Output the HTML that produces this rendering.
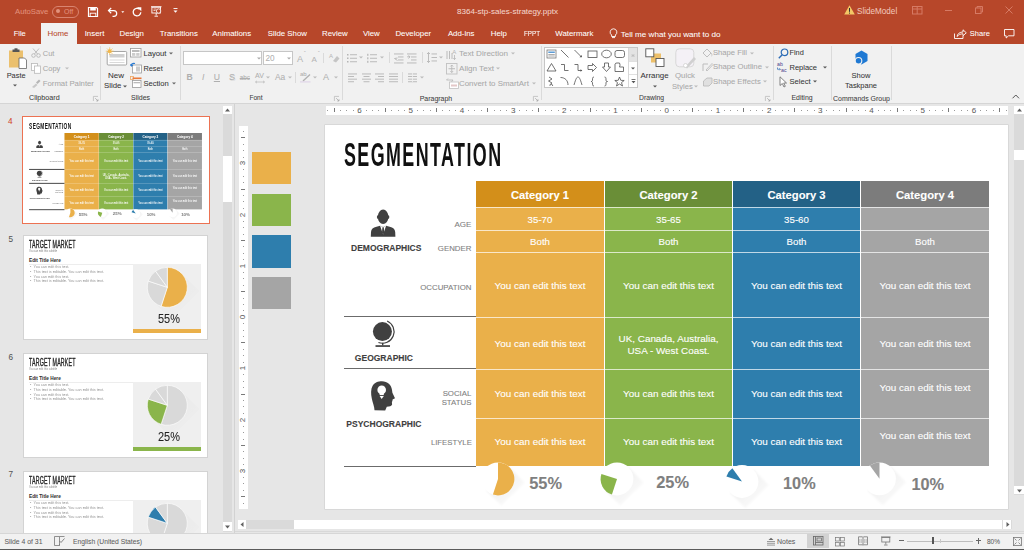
<!DOCTYPE html>
<html><head><meta charset="utf-8"><style>
html,body{margin:0;padding:0;width:1024px;height:550px;overflow:hidden;background:#E6E6E6}
body{position:relative;font-family:"Liberation Sans",sans-serif}
.r{position:absolute}
.t{position:absolute;white-space:nowrap;-webkit-text-stroke:0.05px currentColor}
.sl .t{-webkit-text-stroke:0.1px currentColor}
svg{overflow:visible}
</style></head><body>
<div class="r" style="left:0px;top:0px;width:1024px;height:44px;background:#B7472A;"></div><div class="t" style="top:8px;font-size:7.7px;line-height:7.7px;color:#E2927D;left:15.00px;font-family:'Liberation Sans', sans-serif;">AutoSave</div><div class="r" style="left:52px;top:6.2px;width:24.5px;height:9.6px;border:1px solid #D98470;border-radius:6px"></div><div class="r" style="left:55.8px;top:9.3px;width:4.2px;height:4.2px;border-radius:50%;background:#E2927D"></div><div class="t" style="top:8px;font-size:7.0px;line-height:7.0px;color:#E2927D;left:64.00px;font-family:'Liberation Sans', sans-serif;">Off</div><svg class="r" style="left:87px;top:6px" width="12" height="12" viewBox="0 0 12 12"><path d="M1.5,1.5 H9.5 L10.5,2.5 V10.5 H1.5 Z" fill="none" stroke="#fff" stroke-width="1.2"/><rect x="3.2" y="1.5" width="5.6" height="3" fill="#fff"/><rect x="3.2" y="7.2" width="5.6" height="3.3" fill="none" stroke="#fff" stroke-width="0.9"/></svg><svg class="r" style="left:107px;top:6.5px" width="20" height="10" viewBox="0 0 20 10"><path d="M1.8,3.6 H6.8 A2.9,2.9 0 0 1 6.8,9.4 H5.5" fill="none" stroke="#fff" stroke-width="1.2"/><path d="M4.2,1 L1.5,3.6 L4.2,6.2" fill="none" stroke="#fff" stroke-width="1.2"/><path d="M14.3,4.3 L17.3,4.3 L15.8,6 Z" fill="#fff"/></svg><svg class="r" style="left:131.5px;top:6.5px" width="10" height="10" viewBox="0 0 10 10"><path d="M7.6,2.3 A3.8,3.8 0 1 0 8.8,5.3" fill="none" stroke="#fff" stroke-width="1.3"/><path d="M5.3,0.2 L9.3,0.2 L9.3,4.2 Z" fill="#fff"/></svg><svg class="r" style="left:150.5px;top:5.5px" width="11" height="11" viewBox="0 0 11 11"><rect x="0" y="0.3" width="10.5" height="0.9" fill="#fff"/><rect x="0.9" y="1.2" width="8.6" height="5.8" fill="none" stroke="#fff" stroke-width="0.9"/><path d="M2.5,3 H5.5 M2.5,4.5 H4.5" stroke="#fff" stroke-width="0.7"/><circle cx="7.6" cy="5" r="2.2" fill="#B7472A" stroke="#fff" stroke-width="0.8"/><path d="M5.2,7 V9.5 M3.5,10.2 H7" stroke="#fff" stroke-width="0.9"/></svg><svg class="r" style="left:172.5px;top:8px" width="5" height="6" viewBox="0 0 5 6"><rect x="0.5" y="0" width="4" height="0.9" fill="#fff"/><path d="M0.5,2.5 H4.5 L2.5,4.8 Z" fill="#fff"/></svg><div class="t" style="top:8px;font-size:8.05px;line-height:8.05px;color:#F3D4CA;left:457.00px;font-family:'Liberation Sans', sans-serif;">8364-stp-sales-strategy.pptx</div><svg class="r" style="left:843.5px;top:4.8px" width="11" height="10" viewBox="0 0 11 10"><path d="M5.5,0.3 L10.8,9.6 H0.2 Z" fill="#F3C766"/><rect x="5" y="3" width="1" height="3.8" fill="#333"/><rect x="5" y="7.6" width="1" height="1" fill="#333"/></svg><div class="t" style="top:8px;font-size:8.15px;line-height:8.15px;color:#F0C5B8;left:857.00px;font-family:'Liberation Sans', sans-serif;">SlideModel</div><svg class="r" style="left:912px;top:6px" width="11" height="9" viewBox="0 0 11 9"><rect x="0.5" y="0.5" width="9.5" height="7.5" fill="none" stroke="#D67A64" stroke-width="1"/><path d="M5.2,0.5 V8 M0.5,3 H10" stroke="#D67A64" stroke-width="1"/></svg><div class="r" style="left:945px;top:10px;width:7px;height:1px;background:#D67A64;"></div><svg class="r" style="left:974.5px;top:6px" width="8" height="8" viewBox="0 0 8 8"><rect x="0.5" y="2" width="5.5" height="5.5" fill="none" stroke="#D67A64"/><path d="M2,2 V0.5 H7.5 V6 H6" fill="none" stroke="#D67A64"/></svg><svg class="r" style="left:1005px;top:6px" width="8" height="8" viewBox="0 0 8 8"><path d="M0.5,0.5 L7.5,7.5 M7.5,0.5 L0.5,7.5" stroke="#D67A64" stroke-width="1"/></svg><div class="r" style="left:40.8px;top:23px;width:36px;height:21px;background:#F1F1F1;"></div><div class="t" style="top:30px;font-size:7.5px;line-height:7.5px;color:#FFFFFF;left:13.70px;font-family:'Liberation Sans', sans-serif;">File</div><div class="t" style="top:30px;font-size:7.85px;line-height:7.85px;color:#B7472A;left:47.50px;font-family:'Liberation Sans', sans-serif;">Home</div><div class="t" style="top:30px;font-size:7.85px;line-height:7.85px;color:#FFFFFF;left:84.70px;font-family:'Liberation Sans', sans-serif;">Insert</div><div class="t" style="top:30px;font-size:7.85px;line-height:7.85px;color:#FFFFFF;left:119.50px;font-family:'Liberation Sans', sans-serif;">Design</div><div class="t" style="top:30px;font-size:7.85px;line-height:7.85px;color:#FFFFFF;left:159.80px;font-family:'Liberation Sans', sans-serif;">Transitions</div><div class="t" style="top:30px;font-size:7.85px;line-height:7.85px;color:#FFFFFF;left:212.30px;font-family:'Liberation Sans', sans-serif;">Animations</div><div class="t" style="top:30px;font-size:7.85px;line-height:7.85px;color:#FFFFFF;left:267.70px;font-family:'Liberation Sans', sans-serif;">Slide Show</div><div class="t" style="top:30px;font-size:7.85px;line-height:7.85px;color:#FFFFFF;left:322.00px;font-family:'Liberation Sans', sans-serif;">Review</div><div class="t" style="top:30px;font-size:7.85px;line-height:7.85px;color:#FFFFFF;left:362.90px;font-family:'Liberation Sans', sans-serif;">View</div><div class="t" style="top:30px;font-size:7.85px;line-height:7.85px;color:#FFFFFF;left:395.40px;font-family:'Liberation Sans', sans-serif;">Developer</div><div class="t" style="top:30px;font-size:7.85px;line-height:7.85px;color:#FFFFFF;left:447.90px;font-family:'Liberation Sans', sans-serif;">Add-ins</div><div class="t" style="top:30px;font-size:7.85px;line-height:7.85px;color:#FFFFFF;left:490.80px;font-family:'Liberation Sans', sans-serif;">Help</div><div class="t" style="top:30px;font-size:7.85px;line-height:7.85px;color:#FFFFFF;left:523.50px;transform:scaleX(0.8);transform-origin:0 0;font-family:'Liberation Sans', sans-serif;">FPPT</div><div class="t" style="top:30px;font-size:7.85px;line-height:7.85px;color:#FFFFFF;left:555.30px;font-family:'Liberation Sans', sans-serif;">Watermark</div><svg class="r" style="left:609px;top:27.5px" width="9" height="11" viewBox="0 0 9 11"><path d="M4.5,0.8 A3.4,3.4 0 0 1 6.4,7 V8.5 H2.6 V7 A3.4,3.4 0 0 1 4.5,0.8 Z" fill="none" stroke="#fff" stroke-width="0.9"/><path d="M3,9.6 H6" stroke="#fff" stroke-width="0.9"/></svg><div class="t" style="top:31px;font-size:8.1px;line-height:8.1px;color:#FFFFFF;left:620.70px;font-family:'Liberation Sans', sans-serif;">Tell me what you want to do</div><svg class="r" style="left:953.5px;top:28.5px" width="13" height="10" viewBox="0 0 13 10"><path d="M0.5,4.5 V9.5 H9 V7" fill="none" stroke="#fff" stroke-width="0.9"/><path d="M3,7.5 C3.5,4.5 6,3 9,3 V0.8 L12.3,3.8 L9,6.8 V4.8 C6.5,4.8 4.5,5.8 3,7.5 Z" fill="none" stroke="#fff" stroke-width="0.9"/></svg><div class="t" style="top:30px;font-size:7.5px;line-height:7.5px;color:#FFFFFF;left:969.80px;font-family:'Liberation Sans', sans-serif;">Share</div><svg class="r" style="left:1003.5px;top:28.5px" width="11" height="10" viewBox="0 0 11 10"><path d="M0.5,0.5 H10 V6.8 H4.5 L2.2,9 V6.8 H0.5 Z" fill="none" stroke="#fff" stroke-width="0.9"/></svg><div class="r" style="left:0px;top:44px;width:1024px;height:60px;background:#F1F1F1;"></div><div class="r" style="left:0px;top:103px;width:1024px;height:1px;background:#D5D5D5;"></div><svg class="r" style="left:7.5px;top:47.5px" width="20" height="22" viewBox="0 0 20 22"><rect x="1" y="2.5" width="14" height="17" fill="#EBC06E"/><path d="M4.5,1.5 H11.5 V4 H4.5 Z" fill="#555"/><path d="M6.5,0.3 H9.5 V2 H6.5 Z" fill="#555"/><path d="M11,10 H16.5 L18.5,12 V20.5 H11 Z" fill="#fff" stroke="#666" stroke-width="0.8"/></svg><div class="t" style="top:72px;font-size:7.4px;line-height:7.4px;color:#363636;left:6.70px;font-family:'Liberation Sans', sans-serif;">Paste</div><svg class="r" style="left:13px;top:84.0px" width="4" height="3" viewBox="0 0 4 3"><path d="M0,0.5 H4 L2,2.6 Z" fill="#555"/></svg><svg class="r" style="left:30.5px;top:48px" width="10" height="10" viewBox="0 0 10 10"><circle cx="2.5" cy="7.5" r="1.8" fill="none" stroke="#B0B0B0" stroke-width="0.8"/><circle cx="7.5" cy="7.5" r="1.8" fill="none" stroke="#B0B0B0" stroke-width="0.8"/><path d="M3.5,6 L8,0.5 M6.5,6 L2,0.5" stroke="#B0B0B0" stroke-width="0.8"/></svg><div class="t" style="top:50px;font-size:7.4px;line-height:7.4px;color:#A8A8A8;left:42.80px;font-family:'Liberation Sans', sans-serif;">Cut</div><svg class="r" style="left:30.5px;top:62.5px" width="11" height="11" viewBox="0 0 11 11"><rect x="0.5" y="0.5" width="6" height="7" fill="#fff" stroke="#B8B8B8" stroke-width="0.8"/><rect x="3.5" y="3" width="6" height="7.3" fill="#fff" stroke="#B8B8B8" stroke-width="0.8"/></svg><div class="t" style="top:65px;font-size:7.5px;line-height:7.5px;color:#A8A8A8;left:42.80px;font-family:'Liberation Sans', sans-serif;">Copy</div><svg class="r" style="left:65.4px;top:67.2px" width="4" height="3" viewBox="0 0 4 3"><path d="M0,0.5 H4 L2,2.6 Z" fill="#BDBDBD"/></svg><svg class="r" style="left:31px;top:78.5px" width="10" height="9" viewBox="0 0 10 9"><path d="M1,8 L5,4.5 L6.5,6 L3,9 Z" fill="#C8C8C8"/><path d="M5,3.5 L8,0.5 L9.5,2 L6.5,5 Z" fill="#B5B5B5"/></svg><div class="t" style="top:80px;font-size:7.74px;line-height:7.74px;color:#A8A8A8;left:42.80px;font-family:'Liberation Sans', sans-serif;">Format Painter</div><div class="t" style="top:95px;font-size:7.17px;line-height:7.17px;color:#404040;left:29.00px;font-family:'Liberation Sans', sans-serif;">Clipboard</div><svg class="r" style="left:93.0px;top:95.5px" width="6" height="6" viewBox="0 0 6 6"><path d="M0.4,0.4 H5 M0.4,0.4 V5" stroke="#B5B5B5" stroke-width="0.7" fill="none"/><path d="M2.2,2.2 L5,5 M5,3.3 V5 H3.3" stroke="#A0A0A0" stroke-width="0.7" fill="none"/></svg><div class="r" style="left:100.3px;top:46px;width:1px;height:54px;background:#DADADA;"></div><svg class="r" style="left:105.5px;top:46.5px" width="22" height="19" viewBox="0 0 22 19"><rect x="1.2" y="4.5" width="19.5" height="13.5" rx="1" fill="#fff" stroke="#9c9c9c" stroke-width="0.9"/><rect x="3.5" y="7" width="15" height="3.5" fill="#d0d0d0"/><path d="M3.5,13 H18.5 M3.5,15.5 H18.5" stroke="#cfcfcf" stroke-width="0.8"/><circle cx="3.7" cy="4.2" r="1.9" fill="#F2B84B"/><path d="M3.7,0.3 V8.1 M-0.2,4.2 H7.6 M1,1.5 L6.4,6.9 M6.4,1.5 L1,6.9" stroke="#F2B84B" stroke-width="0.7"/></svg><div class="t" style="top:72px;font-size:8.0px;line-height:8.0px;color:#363636;left:-384.00px;width:1000px;text-align:center;font-family:'Liberation Sans', sans-serif;">New</div><div class="t" style="top:82px;font-size:7.8px;line-height:7.8px;color:#363636;left:104.00px;font-family:'Liberation Sans', sans-serif;">Slide</div><svg class="r" style="left:123px;top:84.5px" width="4" height="3" viewBox="0 0 4 3"><path d="M0,0.5 H4 L2,2.6 Z" fill="#555"/></svg><svg class="r" style="left:130px;top:47.5px" width="12" height="10" viewBox="0 0 12 10"><rect x="0.5" y="0.5" width="10.5" height="8.5" fill="#fff" stroke="#999" stroke-width="0.8"/><rect x="2" y="2" width="7.5" height="2" fill="#bbb"/><rect x="2" y="5" width="3.3" height="2.8" fill="#ccc"/><rect x="6.2" y="5" width="3.3" height="2.8" fill="#ccc"/></svg><div class="t" style="top:50px;font-size:7.69px;line-height:7.69px;color:#363636;left:143.40px;font-family:'Liberation Sans', sans-serif;">Layout</div><svg class="r" style="left:168.5px;top:52.0px" width="4" height="3" viewBox="0 0 4 3"><path d="M0,0.5 H4 L2,2.6 Z" fill="#666"/></svg><svg class="r" style="left:130px;top:61.5px" width="12" height="12" viewBox="0 0 12 12"><rect x="2.5" y="3" width="9" height="8" fill="#fff" stroke="#999" stroke-width="0.8"/><rect x="6" y="4.5" width="4" height="5" fill="#ccc"/><path d="M0.8,4 A3.5,3.5 0 0 1 5,1.5" fill="none" stroke="#2B7CD3" stroke-width="1.1"/><path d="M0,2 L1.2,4.8 L3.5,3.2 Z" fill="#2B7CD3"/></svg><div class="t" style="top:65px;font-size:7.4px;line-height:7.4px;color:#363636;left:143.40px;font-family:'Liberation Sans', sans-serif;">Reset</div><svg class="r" style="left:130px;top:76px" width="12" height="12" viewBox="0 0 12 12"><rect x="0.5" y="0.5" width="3" height="3" fill="none" stroke="#F0A860" stroke-width="0.8"/><rect x="2.5" y="1.5" width="9" height="1.6" fill="#E8793A"/><rect x="2.5" y="4.5" width="8.5" height="7" fill="#fff" stroke="#999" stroke-width="0.8"/><rect x="3.5" y="6" width="6.5" height="1.3" fill="#bbb"/></svg><div class="t" style="top:80px;font-size:7.62px;line-height:7.62px;color:#363636;left:143.40px;font-family:'Liberation Sans', sans-serif;">Section</div><svg class="r" style="left:171.5px;top:82.0px" width="4" height="3" viewBox="0 0 4 3"><path d="M0,0.5 H4 L2,2.6 Z" fill="#666"/></svg><div class="t" style="top:94px;font-size:7.0px;line-height:7.0px;color:#404040;left:131.00px;font-family:'Liberation Sans', sans-serif;">Slides</div><div class="r" style="left:180.3px;top:46px;width:1px;height:54px;background:#DADADA;"></div><div class="r" style="left:183.3px;top:50.8px;width:79px;height:14px;background:#fff;border:1px solid #C6C6C6;box-sizing:border-box"></div><div class="r" style="left:262.5px;top:50.8px;width:30px;height:14px;background:#fff;border:1px solid #C6C6C6;box-sizing:border-box"></div><svg class="r" style="left:257px;top:56.8px" width="4" height="3" viewBox="0 0 4 3"><path d="M0,0.5 H4 L2,2.6 Z" fill="#AAA"/></svg><svg class="r" style="left:286.5px;top:56.8px" width="4" height="3" viewBox="0 0 4 3"><path d="M0,0.5 H4 L2,2.6 Z" fill="#AAA"/></svg><div class="t" style="top:55px;font-size:8.2px;line-height:8.2px;color:#B0B0B0;left:265.50px;font-family:'Liberation Sans', sans-serif;">20</div><div class="t" style="top:55px;font-size:9.2px;line-height:9.2px;color:#B5B5B5;left:297.00px;font-family:'Liberation Sans', sans-serif;">A</div><div class="t" style="top:51px;font-size:5px;line-height:5px;color:#B5B5B5;left:304.00px;font-family:'Liberation Sans', sans-serif;">&#710;</div><div class="t" style="top:56px;font-size:8.0px;line-height:8.0px;color:#B5B5B5;left:311.50px;font-family:'Liberation Sans', sans-serif;">A</div><div class="t" style="top:51px;font-size:5px;line-height:5px;color:#B5B5B5;left:318.00px;font-family:'Liberation Sans', sans-serif;">&#711;</div><div class="r" style="left:323.3px;top:53px;width:1px;height:10px;background:#DADADA;"></div><svg class="r" style="left:329px;top:52px" width="11" height="11" viewBox="0 0 11 11"><text x="0" y="6" font-size="6" fill="#B5B5B5" font-family="Liberation Sans">A</text><path d="M4,9 L8,4 L10.5,6.5 L7,10.5 Z" fill="#C5C5C5"/></svg><div class="t" style="top:73px;font-size:8.6px;line-height:8.6px;color:#AFAFAF;font-weight:bold;left:186.50px;font-family:'Liberation Sans', sans-serif;">B</div><div class="t" style="top:73px;font-size:8.6px;line-height:8.6px;color:#AFAFAF;left:202.00px;font-family:'Liberation Sans', sans-serif;font-style:italic">I</div><div class="t" style="top:73px;font-size:8.6px;line-height:8.6px;color:#AFAFAF;left:213.80px;font-family:'Liberation Sans', sans-serif;text-decoration:underline">U</div><div class="t" style="top:73px;font-size:9.0px;line-height:9.0px;color:#AFAFAF;left:229.00px;font-family:'Liberation Sans', sans-serif;text-shadow:0.8px 0.8px 0 #ddd">S</div><div class="t" style="top:75px;font-size:6.3px;line-height:6.3px;color:#AFAFAF;left:239.80px;font-family:'Liberation Sans', sans-serif;text-decoration:line-through">abc</div><div class="t" style="top:72px;font-size:7.0px;line-height:7.0px;color:#AFAFAF;left:255.00px;font-family:'Liberation Sans', sans-serif;">AV</div><svg class="r" style="left:254.5px;top:79.5px" width="10" height="4" viewBox="0 0 10 4"><path d="M0.5,2 H9.5 M0.5,2 L2,0.8 M0.5,2 L2,3.2 M9.5,2 L8,0.8 M9.5,2 L8,3.2" stroke="#B0B0B0" stroke-width="0.6" fill="none"/></svg><svg class="r" style="left:266px;top:76.0px" width="4" height="3" viewBox="0 0 4 3"><path d="M0,0.5 H4 L2,2.6 Z" fill="#BBB"/></svg><div class="t" style="top:73px;font-size:8.4px;line-height:8.4px;color:#AFAFAF;left:275.00px;font-family:'Liberation Sans', sans-serif;">Aa</div><svg class="r" style="left:287.5px;top:76.0px" width="4" height="3" viewBox="0 0 4 3"><path d="M0,0.5 H4 L2,2.6 Z" fill="#BBB"/></svg><div class="r" style="left:295px;top:72px;width:1px;height:11px;background:#DADADA;"></div><div class="t" style="top:71px;font-size:6px;line-height:6px;color:#B0B0B0;left:300.00px;font-family:'Liberation Sans', sans-serif;">ab</div><svg class="r" style="left:299.5px;top:73px" width="12" height="10" viewBox="0 0 12 10"><path d="M3,8 L10,1.5" stroke="#B0B0B0" stroke-width="1.3"/><rect x="0" y="8.3" width="10.5" height="1.2" fill="#E0D5E8"/></svg><svg class="r" style="left:313px;top:76.0px" width="4" height="3" viewBox="0 0 4 3"><path d="M0,0.5 H4 L2,2.6 Z" fill="#BBB"/></svg><div class="t" style="top:73px;font-size:9.0px;line-height:9.0px;color:#AFAFAF;left:323.00px;font-family:'Liberation Sans', sans-serif;">A</div><svg class="r" style="left:334px;top:76.0px" width="4" height="3" viewBox="0 0 4 3"><path d="M0,0.5 H4 L2,2.6 Z" fill="#BBB"/></svg><div class="t" style="top:95px;font-size:6.55px;line-height:6.55px;color:#404040;left:249.40px;font-family:'Liberation Sans', sans-serif;">Font</div><svg class="r" style="left:334.0px;top:95.5px" width="6" height="6" viewBox="0 0 6 6"><path d="M0.4,0.4 H5 M0.4,0.4 V5" stroke="#B5B5B5" stroke-width="0.7" fill="none"/><path d="M2.2,2.2 L5,5 M5,3.3 V5 H3.3" stroke="#A0A0A0" stroke-width="0.7" fill="none"/></svg><div class="r" style="left:342.3px;top:46px;width:1px;height:54px;background:#DADADA;"></div><svg class="r" style="left:346.5px;top:52.5px" width="11" height="11" viewBox="0 0 11 11"><rect x="0" y="1.0" width="1.5" height="1.5" fill="#B5B5B5"/><rect x="3" y="1.3" width="7" height="0.9" fill="#B5B5B5"/><rect x="0" y="4.5" width="1.5" height="1.5" fill="#B5B5B5"/><rect x="3" y="4.8" width="7" height="0.9" fill="#B5B5B5"/><rect x="0" y="8.0" width="1.5" height="1.5" fill="#B5B5B5"/><rect x="3" y="8.3" width="7" height="0.9" fill="#B5B5B5"/></svg><svg class="r" style="left:359px;top:56.0px" width="4" height="3" viewBox="0 0 4 3"><path d="M0,0.5 H4 L2,2.6 Z" fill="#BBB"/></svg><svg class="r" style="left:367px;top:52.5px" width="11" height="11" viewBox="0 0 11 11"><rect x="0" y="0.8" width="1.5" height="2" fill="#C0C0C0"/><rect x="3" y="1.3" width="7" height="0.9" fill="#B5B5B5"/><rect x="0" y="4.3" width="1.5" height="2" fill="#C0C0C0"/><rect x="3" y="4.8" width="7" height="0.9" fill="#B5B5B5"/><rect x="0" y="7.8" width="1.5" height="2" fill="#C0C0C0"/><rect x="3" y="8.3" width="7" height="0.9" fill="#B5B5B5"/></svg><svg class="r" style="left:380px;top:56.0px" width="4" height="3" viewBox="0 0 4 3"><path d="M0,0.5 H4 L2,2.6 Z" fill="#BBB"/></svg><div class="r" style="left:388.5px;top:52px;width:1px;height:11px;background:#DADADA;"></div><svg class="r" style="left:393.5px;top:52.5px" width="11" height="11" viewBox="0 0 11 11"><rect x="0" y="0.5" width="9.5" height="0.9" fill="#B5B5B5"/><rect x="4" y="3.5" width="5.5" height="0.9" fill="#B5B5B5"/><rect x="4" y="6.5" width="5.5" height="0.9" fill="#B5B5B5"/><rect x="0" y="9.5" width="9.5" height="0.9" fill="#B5B5B5"/><path d="M3.5,5 L0.5,5.5 L3.5,7.5" fill="none" stroke="#B5B5B5" stroke-width="0.9"/></svg><svg class="r" style="left:407px;top:52.5px" width="11" height="11" viewBox="0 0 11 11"><rect x="0" y="0.5" width="9.5" height="0.9" fill="#B5B5B5"/><rect x="4" y="3.5" width="5.5" height="0.9" fill="#B5B5B5"/><rect x="4" y="6.5" width="5.5" height="0.9" fill="#B5B5B5"/><rect x="0" y="9.5" width="9.5" height="0.9" fill="#B5B5B5"/><path d="M0.2,3.8 H3 M1.5,2.5 L3,3.8 L1.5,5.5" fill="none" stroke="#B5B5B5" stroke-width="0.9"/></svg><div class="r" style="left:421.5px;top:52px;width:1px;height:11px;background:#DADADA;"></div><svg class="r" style="left:427px;top:52px" width="11" height="11" viewBox="0 0 11 11"><path d="M1.5,0.5 V10.5 M0,2 L1.5,0.5 L3,2 M0,9 L1.5,10.5 L3,9" stroke="#B5B5B5" stroke-width="0.9" fill="none"/><rect x="4.5" y="1.5" width="5.5" height="0.9" fill="#B5B5B5"/><rect x="4.5" y="5.0" width="5.5" height="0.9" fill="#B5B5B5"/><rect x="4.5" y="8.5" width="5.5" height="0.9" fill="#B5B5B5"/></svg><svg class="r" style="left:438.5px;top:56.0px" width="4" height="3" viewBox="0 0 4 3"><path d="M0,0.5 H4 L2,2.6 Z" fill="#BBB"/></svg><svg class="r" style="left:348px;top:73px" width="11" height="11" viewBox="0 0 11 11"><rect x="0" y="0.5" width="9" height="0.9" fill="#B5B5B5"/><rect x="0" y="3.1" width="6" height="0.9" fill="#B5B5B5"/><rect x="0" y="5.7" width="9" height="0.9" fill="#B5B5B5"/><rect x="0" y="8.3" width="6" height="0.9" fill="#B5B5B5"/></svg><svg class="r" style="left:361.5px;top:73px" width="11" height="11" viewBox="0 0 11 11"><rect x="0.0" y="0.5" width="9" height="0.9" fill="#B5B5B5"/><rect x="1.5" y="3.1" width="6" height="0.9" fill="#B5B5B5"/><rect x="0.0" y="5.7" width="9" height="0.9" fill="#B5B5B5"/><rect x="1.5" y="8.3" width="6" height="0.9" fill="#B5B5B5"/></svg><svg class="r" style="left:375px;top:73px" width="11" height="11" viewBox="0 0 11 11"><rect x="0" y="0.5" width="9" height="0.9" fill="#B5B5B5"/><rect x="3" y="3.1" width="6" height="0.9" fill="#B5B5B5"/><rect x="0" y="5.7" width="9" height="0.9" fill="#B5B5B5"/><rect x="3" y="8.3" width="6" height="0.9" fill="#B5B5B5"/></svg><svg class="r" style="left:389px;top:73px" width="11" height="11" viewBox="0 0 11 11"><rect x="0" y="0.5" width="9" height="0.9" fill="#B5B5B5"/><rect x="0" y="3.1" width="9" height="0.9" fill="#B5B5B5"/><rect x="0" y="5.7" width="9" height="0.9" fill="#B5B5B5"/><rect x="0" y="8.3" width="9" height="0.9" fill="#B5B5B5"/></svg><div class="r" style="left:402px;top:72px;width:1px;height:11px;background:#DADADA;"></div><svg class="r" style="left:407.5px;top:73px" width="11" height="11" viewBox="0 0 11 11"><rect x="0" y="0.5" width="9" height="0.9" fill="#B5B5B5"/><rect x="0" y="3.1" width="9" height="0.9" fill="#B5B5B5"/><rect x="0" y="5.7" width="9" height="0.9" fill="#B5B5B5"/><rect x="0" y="8.3" width="9" height="0.9" fill="#B5B5B5"/><rect x="4.2" y="0" width="0.8" height="9" fill="#F1F1F1"/></svg><svg class="r" style="left:419.5px;top:76.0px" width="4" height="3" viewBox="0 0 4 3"><path d="M0,0.5 H4 L2,2.6 Z" fill="#BBB"/></svg><svg class="r" style="left:446px;top:47.5px" width="12" height="12" viewBox="0 0 12 12"><path d="M1,11 V3 M3.5,11 V3 M6,11 V5" stroke="#B5B5B5" stroke-width="0.9"/><text x="6.3" y="5.5" font-size="6" fill="#B5B5B5" font-family="Liberation Sans">A</text><path d="M8.5,7 V11.5 M7.3,10 L8.5,11.5 L9.7,10" stroke="#B5B5B5" stroke-width="0.8" fill="none"/></svg><div class="t" style="top:50px;font-size:8.09px;line-height:8.09px;color:#A8A8A8;left:459.00px;font-family:'Liberation Sans', sans-serif;">Text Direction</div><svg class="r" style="left:510.5px;top:52.0px" width="4" height="3" viewBox="0 0 4 3"><path d="M0,0.5 H4 L2,2.6 Z" fill="#BBB"/></svg><svg class="r" style="left:446px;top:62.5px" width="12" height="12" viewBox="0 0 12 12"><rect x="0.5" y="0.5" width="10.5" height="10.5" fill="none" stroke="#C0C0C0" stroke-width="0.9"/><path d="M5.75,2 V9.5 M4.3,3.5 L5.75,2 L7.2,3.5 M4.3,8 L5.75,9.5 L7.2,8" stroke="#B5B5B5" stroke-width="0.8" fill="none"/><rect x="2.5" y="5.3" width="6.5" height="0.9" fill="#B5B5B5"/></svg><div class="t" style="top:65px;font-size:8.11px;line-height:8.11px;color:#A8A8A8;left:459.00px;font-family:'Liberation Sans', sans-serif;">Align Text</div><svg class="r" style="left:495.5px;top:67.0px" width="4" height="3" viewBox="0 0 4 3"><path d="M0,0.5 H4 L2,2.6 Z" fill="#BBB"/></svg><svg class="r" style="left:446px;top:77.5px" width="13" height="11" viewBox="0 0 13 11"><path d="M0.5,2 H7 L5.5,4 M0.5,2 L2,0.5" stroke="#B5B5B5" stroke-width="0.8" fill="none"/><rect x="3.5" y="4" width="9" height="6.5" fill="#fff" stroke="#C0C0C0" stroke-width="0.8"/><rect x="5" y="6.5" width="6" height="2" fill="#E4C8C8"/></svg><div class="t" style="top:80px;font-size:7.92px;line-height:7.92px;color:#A8A8A8;left:459.00px;font-family:'Liberation Sans', sans-serif;">Convert to SmartArt</div><svg class="r" style="left:531.5px;top:82.0px" width="4" height="3" viewBox="0 0 4 3"><path d="M0,0.5 H4 L2,2.6 Z" fill="#BBB"/></svg><div class="t" style="top:95px;font-size:6.98px;line-height:6.98px;color:#404040;left:419.70px;font-family:'Liberation Sans', sans-serif;">Paragraph</div><svg class="r" style="left:532.5px;top:95.5px" width="6" height="6" viewBox="0 0 6 6"><path d="M0.4,0.4 H5 M0.4,0.4 V5" stroke="#B5B5B5" stroke-width="0.7" fill="none"/><path d="M2.2,2.2 L5,5 M5,3.3 V5 H3.3" stroke="#A0A0A0" stroke-width="0.7" fill="none"/></svg><div class="r" style="left:541px;top:46px;width:1px;height:54px;background:#DADADA;"></div><div class="r" style="left:544.2px;top:47.3px;width:93.4px;height:41px;background:#fff;border:1px solid #C6C6C6;box-sizing:border-box"></div><div class="r" style="left:628.5px;top:48.3px;width:8.2px;height:13px;background:#E3E3E3;"></div><div class="r" style="left:628.3px;top:48.3px;width:0.8px;height:39px;background:#D8D8D8;"></div><div class="r" style="left:629px;top:61.3px;width:8px;height:0.8px;background:#E0E0E0;"></div><div class="r" style="left:629px;top:74.3px;width:8px;height:0.8px;background:#E0E0E0;"></div><svg class="r" style="left:631px;top:53.5px" width="4" height="3" viewBox="0 0 4 3"><path d="M0,0.5 H4 L2,2.6 Z" fill="#C8C8C8"/></svg><svg class="r" style="left:631px;top:53.5px" width="4" height="3" viewBox="0 0 4 3"><path d="M0,2.6 H4 L2,0.5 Z" fill="#BDBDBD"/></svg><svg class="r" style="left:631px;top:66.5px" width="4" height="3" viewBox="0 0 4 3"><path d="M0,0.5 H4 L2,2.6 Z" fill="#555"/></svg><svg class="r" style="left:630.5px;top:79px" width="5" height="5" viewBox="0 0 5 5"><rect x="0.5" y="0" width="4" height="0.8" fill="#555"/><path d="M0.5,2 H4.5 L2.5,4.3 Z" fill="#555"/></svg><svg class="r" style="left:545.5px;top:49.2px" width="82" height="40" viewBox="0 0 82 40"><rect x="1" y="1" width="9" height="8" fill="#fff" stroke="#777" stroke-width="0.8"/><rect x="2.3" y="2.5" width="6.5" height="1.5" fill="#5B9BD5"/><rect x="2.3" y="5" width="6.5" height="0.8" fill="#999"/><rect x="2.3" y="6.6" width="6.5" height="0.8" fill="#999"/><path d="M15,1 L22.5,8.5" stroke="#505050" stroke-width="0.8" fill="none"/><path d="M28.5,1 L35.5,8" stroke="#505050" stroke-width="0.8" fill="none"/><path d="M33.5,8.3 L35.8,8.3 L35.8,6" fill="#505050"/><rect x="42" y="2" width="9" height="6.5" stroke="#505050" stroke-width="0.8" fill="none"/><ellipse cx="60.5" cy="5" rx="4.8" ry="3.8" stroke="#505050" stroke-width="0.8" fill="none"/><rect x="69" y="1.5" width="9.5" height="7" rx="2" stroke="#505050" stroke-width="0.8" fill="none"/><path d="M1,22 L5.5,14.5 L10,22 Z" stroke="#505050" stroke-width="0.8" fill="none"/><path d="M15,15.5 H18.5 V21.5 H22.5" stroke="#505050" stroke-width="0.8" fill="none"/><path d="M28.5,15.5 H32 V21.5 H35.5" stroke="#505050" stroke-width="0.8" fill="none"/><path d="M34.5,20.3 L36.3,21.5 L34.5,22.7 Z" fill="#505050"/><path d="M42,16.5 H46.5 V14.5 L50.5,18.5 L46.5,22.5 V20.5 H42 Z" stroke="#505050" stroke-width="0.8" fill="none"/><path d="M58.5,14 H62.5 V18 H64.5 L60.5,22.5 L56.5,18 H58.5 Z" stroke="#505050" stroke-width="0.8" fill="none"/><path d="M69,22.5 V15 A2,2 0 0 1 71,14 H73.5 A4,4 0 0 1 73.5,18 H77.5 V22.5 Z" stroke="#505050" stroke-width="0.8" fill="none"/><path d="M3,28 L6,30 L2.5,32 L6,34 L3.5,36 M4,36.5 C5,35 7,35 6.5,37" stroke="#505050" stroke-width="0.8" fill="none"/><path d="M14.5,28.5 C19,28.5 22,31.5 22,36" stroke="#505050" stroke-width="0.8" fill="none"/><path d="M28,36 C30,29 31,28 32,28 C33,28 34,29 36,36" stroke="#505050" stroke-width="0.8" fill="none"/><path d="M48,28 C46.5,28 46.5,29 46.5,31 C46.5,32 46,32.5 45,32.5 C46,32.5 46.5,33 46.5,34 C46.5,36 46.5,37 48,37" stroke="#505050" stroke-width="0.8" fill="none"/><path d="M58.5,28 C60,28 60,29 60,31 C60,32 60.5,32.5 61.5,32.5 C60.5,32.5 60,33 60,34 C60,36 60,37 58.5,37" stroke="#505050" stroke-width="0.8" fill="none"/><path d="M73.5,28 L74.8,31.3 L78.2,31.5 L75.5,33.6 L76.5,37 L73.5,35 L70.5,37 L71.5,33.6 L68.8,31.5 L72.2,31.3 Z" stroke="#505050" stroke-width="0.8" fill="none"/></svg><svg class="r" style="left:644.5px;top:47.5px" width="22" height="20" viewBox="0 0 22 20"><rect x="6" y="5.5" width="10" height="9" fill="#EDC06A"/><rect x="0.8" y="0.8" width="8" height="8" fill="#fff" stroke="#555" stroke-width="0.9"/><rect x="11" y="10.5" width="8" height="8" fill="#fff" stroke="#555" stroke-width="0.9"/></svg><div class="t" style="top:72px;font-size:7.93px;line-height:7.93px;color:#363636;left:640.50px;font-family:'Liberation Sans', sans-serif;">Arrange</div><svg class="r" style="left:653px;top:85.0px" width="4" height="3" viewBox="0 0 4 3"><path d="M0,0.5 H4 L2,2.6 Z" fill="#555"/></svg><svg class="r" style="left:674.5px;top:47.5px" width="22" height="21" viewBox="0 0 22 21"><rect x="0.8" y="0.8" width="18" height="18" rx="3.5" fill="#F4F1F6" stroke="#D5D5D5" stroke-width="0.9"/><path d="M10,19 L19,9 L21,11 L12,20.5 Z" fill="#D0D0D0"/><circle cx="10.5" cy="17.5" r="2" fill="#fff" stroke="#CFCFCF" stroke-width="0.8"/></svg><div class="t" style="top:72px;font-size:7.82px;line-height:7.82px;color:#A8A8A8;left:675.00px;font-family:'Liberation Sans', sans-serif;">Quick</div><div class="t" style="top:83px;font-size:7.6px;line-height:7.6px;color:#A8A8A8;left:672.00px;font-family:'Liberation Sans', sans-serif;">Styles</div><svg class="r" style="left:693.5px;top:85.0px" width="4" height="3" viewBox="0 0 4 3"><path d="M0,0.5 H4 L2,2.6 Z" fill="#BBB"/></svg><svg class="r" style="left:702px;top:47.5px" width="11" height="10" viewBox="0 0 11 10"><path d="M2,4 L5,1 L9,5 L5,9 L1,5 Z" fill="none" stroke="#B8B8B8" stroke-width="0.9"/><path d="M9,5 C10,6.5 10.5,7.5 9.5,8" stroke="#B8B8B8" stroke-width="0.8" fill="none"/></svg><div class="t" style="top:49px;font-size:7.65px;line-height:7.65px;color:#A8A8A8;left:713.00px;font-family:'Liberation Sans', sans-serif;">Shape Fill</div><svg class="r" style="left:749.5px;top:51.5px" width="4" height="3" viewBox="0 0 4 3"><path d="M0,0.5 H4 L2,2.6 Z" fill="#BBB"/></svg><svg class="r" style="left:701.5px;top:62px" width="12" height="10" viewBox="0 0 12 10"><path d="M1,9 L1,2 H6" stroke="#B8B8B8" stroke-width="0.9" fill="none"/><path d="M4,8 L10,1.5 L11,2.5 L5,9 Z" fill="none" stroke="#B8B8B8" stroke-width="0.8"/></svg><div class="t" style="top:63px;font-size:7.73px;line-height:7.73px;color:#A8A8A8;left:713.00px;font-family:'Liberation Sans', sans-serif;">Shape Outline</div><svg class="r" style="left:764.5px;top:65.8px" width="4" height="3" viewBox="0 0 4 3"><path d="M0,0.5 H4 L2,2.6 Z" fill="#BBB"/></svg><svg class="r" style="left:701.5px;top:76.5px" width="11" height="10" viewBox="0 0 11 10"><path d="M1.5,4 L5,1 H10 V6 L7,9 H1.5 Z" fill="#E0E0E0" stroke="#B8B8B8" stroke-width="0.8"/></svg><div class="t" style="top:78px;font-size:7.7px;line-height:7.7px;color:#A8A8A8;left:713.00px;font-family:'Liberation Sans', sans-serif;">Shape Effects</div><svg class="r" style="left:762.5px;top:80.1px" width="4" height="3" viewBox="0 0 4 3"><path d="M0,0.5 H4 L2,2.6 Z" fill="#BBB"/></svg><div class="t" style="top:95px;font-size:6.82px;line-height:6.82px;color:#404040;left:639.00px;font-family:'Liberation Sans', sans-serif;">Drawing</div><svg class="r" style="left:765.0px;top:95.5px" width="6" height="6" viewBox="0 0 6 6"><path d="M0.4,0.4 H5 M0.4,0.4 V5" stroke="#B5B5B5" stroke-width="0.7" fill="none"/><path d="M2.2,2.2 L5,5 M5,3.3 V5 H3.3" stroke="#A0A0A0" stroke-width="0.7" fill="none"/></svg><div class="r" style="left:773px;top:46px;width:1px;height:54px;background:#DADADA;"></div><svg class="r" style="left:777.5px;top:47.5px" width="11" height="11" viewBox="0 0 11 11"><circle cx="6.5" cy="4.3" r="3.3" fill="none" stroke="#2B6BB5" stroke-width="1.2"/><path d="M4.2,6.7 L0.8,10.2" stroke="#2B6BB5" stroke-width="1.4"/></svg><div class="t" style="top:49px;font-size:7.35px;line-height:7.35px;color:#363636;left:789.50px;font-family:'Liberation Sans', sans-serif;">Find</div><svg class="r" style="left:777px;top:61px" width="11" height="12" viewBox="0 0 11 12"><text x="0" y="4.8" font-size="5.2" fill="#4B3C8C" font-family="Liberation Sans">ab</text><text x="4" y="10.5" font-size="5.2" fill="#4B3C8C" font-family="Liberation Sans">ac</text><path d="M0.5,6.5 V8.3 H3.3 M2.4,7.3 L3.4,8.3 L2.4,9.3" stroke="#2B6BB5" stroke-width="0.7" fill="none"/></svg><div class="t" style="top:64px;font-size:7.5px;line-height:7.5px;color:#363636;left:789.50px;font-family:'Liberation Sans', sans-serif;">Replace</div><svg class="r" style="left:822.5px;top:65.8px" width="4" height="3" viewBox="0 0 4 3"><path d="M0,0.5 H4 L2,2.6 Z" fill="#555"/></svg><svg class="r" style="left:779px;top:75.5px" width="9" height="12" viewBox="0 0 9 12"><path d="M1,0.8 V9.5 L3.3,7.5 L5,11 L6.3,10.3 L4.7,7 H7.5 Z" fill="#fff" stroke="#666" stroke-width="0.8"/></svg><div class="t" style="top:78px;font-size:7.59px;line-height:7.59px;color:#363636;left:789.50px;font-family:'Liberation Sans', sans-serif;">Select</div><svg class="r" style="left:812.5px;top:80.1px" width="4" height="3" viewBox="0 0 4 3"><path d="M0,0.5 H4 L2,2.6 Z" fill="#555"/></svg><div class="t" style="top:95px;font-size:6.9px;line-height:6.9px;color:#404040;left:791.50px;font-family:'Liberation Sans', sans-serif;">Editing</div><div class="r" style="left:831px;top:46px;width:1px;height:54px;background:#DADADA;"></div><svg class="r" style="left:853.5px;top:49.5px" width="15" height="15" viewBox="0 0 15 15"><path d="M7.5,0.5 L13.5,4 V11 L7.5,14.5 L1.5,11 V4 Z" fill="#1F79D3"/><circle cx="4.5" cy="10.8" r="3.3" fill="#1F79D3" stroke="#F1F1F1" stroke-width="1.1"/></svg><div class="t" style="top:72px;font-size:7.56px;line-height:7.56px;color:#363636;left:361.00px;width:1000px;text-align:center;font-family:'Liberation Sans', sans-serif;">Show</div><div class="t" style="top:82px;font-size:7.48px;line-height:7.48px;color:#363636;left:361.00px;width:1000px;text-align:center;font-family:'Liberation Sans', sans-serif;">Taskpane</div><div class="t" style="top:95px;font-size:6.98px;line-height:6.98px;color:#404040;left:833.00px;font-family:'Liberation Sans', sans-serif;">Commands Group</div><div class="r" style="left:891px;top:46px;width:1px;height:54px;background:#DADADA;"></div><svg class="r" style="left:1011.5px;top:93.8px" width="8" height="5" viewBox="0 0 8 5"><path d="M0.5,4.3 L3.8,1 L7,4.3" stroke="#555" stroke-width="1" fill="none"/></svg><div class="r" style="left:0px;top:104px;width:1024px;height:429px;background:#E6E6E6;"></div><div class="t" style="top:118px;font-size:8.2px;line-height:8.2px;color:#D24726;left:8.00px;font-family:'Liberation Sans', sans-serif;">4</div><div class="r" style="left:22.05px;top:115.7px;width:187.85px;height:108px;box-sizing:border-box;border:1.8px solid #EC7252;background:#fff;overflow:hidden"><div class="r sl" style="left:0.7px;top:0.9px;width:683px;height:384px;transform:scale(0.268);transform-origin:0 0;overflow:hidden;background:#fff"><div class="t" style="top:14px;font-size:32.5px;line-height:32.5px;color:#111;font-weight:bold;left:18.70px;transform:scaleX(0.55);transform-origin:0 0;font-family:'Liberation Sans', sans-serif;letter-spacing:2.6px;-webkit-text-stroke:0;">SEGMENTATION</div><div class="r" style="left:151px;top:56px;width:128px;height:26px;background:#D38F1A;"></div><div class="r" style="left:151px;top:82px;width:128px;height:259.3px;background:#EAB04A;"></div><div class="r" style="left:280px;top:56px;width:127px;height:26px;background:#6A8E37;"></div><div class="r" style="left:280px;top:82px;width:127px;height:259.3px;background:#8AB54B;"></div><div class="r" style="left:408px;top:56px;width:127px;height:26px;background:#236186;"></div><div class="r" style="left:408px;top:82px;width:127px;height:259.3px;background:#2E7EAD;"></div><div class="r" style="left:536px;top:56px;width:128px;height:26px;background:#7C7C7C;"></div><div class="r" style="left:536px;top:82px;width:128px;height:259.3px;background:#A5A5A5;"></div><div class="r" style="left:151px;top:82.0px;width:513px;height:1.1px;background:rgba(255,255,255,0.7);"></div><div class="r" style="left:151px;top:104.5px;width:513px;height:1.1px;background:rgba(255,255,255,0.7);"></div><div class="r" style="left:151px;top:127.0px;width:513px;height:1.1px;background:rgba(255,255,255,0.7);"></div><div class="r" style="left:151px;top:191.89999999999998px;width:513px;height:1.1px;background:rgba(255,255,255,0.7);"></div><div class="r" style="left:151px;top:244.3px;width:513px;height:1.1px;background:rgba(255,255,255,0.7);"></div><div class="r" style="left:151px;top:292.9px;width:513px;height:1.1px;background:rgba(255,255,255,0.7);"></div><div class="t" style="top:65px;font-size:11.24px;line-height:11.24px;color:#fff;font-weight:bold;left:-285.00px;width:1000px;text-align:center;font-family:'Liberation Sans', sans-serif;">Category 1</div><div class="t" style="top:90px;font-size:9.7px;line-height:9.7px;color:#fff;left:-285.00px;width:1000px;text-align:center;font-family:'Liberation Sans', sans-serif;">35-70</div><div class="t" style="top:112px;font-size:9.7px;line-height:9.7px;color:#fff;left:-285.00px;width:1000px;text-align:center;font-family:'Liberation Sans', sans-serif;">Both</div><div class="t" style="top:156px;font-size:9.9px;line-height:9.9px;color:#fff;left:-285.00px;width:1000px;text-align:center;font-family:'Liberation Sans', sans-serif;">You can edit this text</div><div class="t" style="top:214px;font-size:9.9px;line-height:9.9px;color:#fff;left:-285.00px;width:1000px;text-align:center;font-family:'Liberation Sans', sans-serif;">You can edit this text</div><div class="t" style="top:264px;font-size:9.9px;line-height:9.9px;color:#fff;left:-285.00px;width:1000px;text-align:center;font-family:'Liberation Sans', sans-serif;">You can edit this text</div><div class="t" style="top:312px;font-size:9.9px;line-height:9.9px;color:#fff;left:-285.00px;width:1000px;text-align:center;font-family:'Liberation Sans', sans-serif;">You can edit this text</div><div class="t" style="top:65px;font-size:11.24px;line-height:11.24px;color:#fff;font-weight:bold;left:-156.50px;width:1000px;text-align:center;font-family:'Liberation Sans', sans-serif;">Category 2</div><div class="t" style="top:90px;font-size:9.7px;line-height:9.7px;color:#fff;left:-156.50px;width:1000px;text-align:center;font-family:'Liberation Sans', sans-serif;">35-65</div><div class="t" style="top:112px;font-size:9.7px;line-height:9.7px;color:#fff;left:-156.50px;width:1000px;text-align:center;font-family:'Liberation Sans', sans-serif;">Both</div><div class="t" style="top:156px;font-size:9.9px;line-height:9.9px;color:#fff;left:-156.50px;width:1000px;text-align:center;font-family:'Liberation Sans', sans-serif;">You can edit this text</div><div class="t" style="top:209px;font-size:9.9px;line-height:9.9px;color:#fff;left:-156.50px;width:1000px;text-align:center;font-family:'Liberation Sans', sans-serif;">UK, Canada, Australia,</div><div class="t" style="top:221px;font-size:9.9px;line-height:9.9px;color:#fff;left:-156.50px;width:1000px;text-align:center;font-family:'Liberation Sans', sans-serif;">USA - West Coast.</div><div class="t" style="top:264px;font-size:9.9px;line-height:9.9px;color:#fff;left:-156.50px;width:1000px;text-align:center;font-family:'Liberation Sans', sans-serif;">You can edit this text</div><div class="t" style="top:312px;font-size:9.9px;line-height:9.9px;color:#fff;left:-156.50px;width:1000px;text-align:center;font-family:'Liberation Sans', sans-serif;">You can edit this text</div><div class="t" style="top:65px;font-size:11.24px;line-height:11.24px;color:#fff;font-weight:bold;left:-28.50px;width:1000px;text-align:center;font-family:'Liberation Sans', sans-serif;">Category 3</div><div class="t" style="top:90px;font-size:9.7px;line-height:9.7px;color:#fff;left:-28.50px;width:1000px;text-align:center;font-family:'Liberation Sans', sans-serif;">35-60</div><div class="t" style="top:112px;font-size:9.7px;line-height:9.7px;color:#fff;left:-28.50px;width:1000px;text-align:center;font-family:'Liberation Sans', sans-serif;">Both</div><div class="t" style="top:156px;font-size:9.9px;line-height:9.9px;color:#fff;left:-28.50px;width:1000px;text-align:center;font-family:'Liberation Sans', sans-serif;">You can edit this text</div><div class="t" style="top:214px;font-size:9.9px;line-height:9.9px;color:#fff;left:-28.50px;width:1000px;text-align:center;font-family:'Liberation Sans', sans-serif;">You can edit this text</div><div class="t" style="top:264px;font-size:9.9px;line-height:9.9px;color:#fff;left:-28.50px;width:1000px;text-align:center;font-family:'Liberation Sans', sans-serif;">You can edit this text</div><div class="t" style="top:312px;font-size:9.9px;line-height:9.9px;color:#fff;left:-28.50px;width:1000px;text-align:center;font-family:'Liberation Sans', sans-serif;">You can edit this text</div><div class="t" style="top:65px;font-size:11.24px;line-height:11.24px;color:#fff;font-weight:bold;left:100.00px;width:1000px;text-align:center;font-family:'Liberation Sans', sans-serif;">Category 4</div><div class="t" style="top:112px;font-size:9.7px;line-height:9.7px;color:#fff;left:100.00px;width:1000px;text-align:center;font-family:'Liberation Sans', sans-serif;">Both</div><div class="t" style="top:156px;font-size:9.9px;line-height:9.9px;color:#fff;left:100.00px;width:1000px;text-align:center;font-family:'Liberation Sans', sans-serif;">You can edit this text</div><div class="t" style="top:214px;font-size:9.9px;line-height:9.9px;color:#fff;left:100.00px;width:1000px;text-align:center;font-family:'Liberation Sans', sans-serif;">You can edit this text</div><div class="t" style="top:258px;font-size:9.9px;line-height:9.9px;color:#fff;left:100.00px;width:1000px;text-align:center;font-family:'Liberation Sans', sans-serif;">You can edit this text</div><div class="t" style="top:306px;font-size:9.9px;line-height:9.9px;color:#fff;left:100.00px;width:1000px;text-align:center;font-family:'Liberation Sans', sans-serif;">You can edit this text</div><div class="t" style="top:96px;font-size:8.0px;line-height:8.0px;color:#7F7F7F;left:-853.60px;width:1000px;text-align:right;font-family:'Liberation Sans', sans-serif;">AGE</div><div class="t" style="top:120px;font-size:7.85px;line-height:7.85px;color:#7F7F7F;left:-853.60px;width:1000px;text-align:right;font-family:'Liberation Sans', sans-serif;">GENDER</div><div class="t" style="top:159px;font-size:7.85px;line-height:7.85px;color:#7F7F7F;left:-853.60px;width:1000px;text-align:right;font-family:'Liberation Sans', sans-serif;">OCCUPATION</div><div class="t" style="top:265px;font-size:7.85px;line-height:7.85px;color:#7F7F7F;left:-853.60px;width:1000px;text-align:right;font-family:'Liberation Sans', sans-serif;">SOCIAL</div><div class="t" style="top:274px;font-size:7.85px;line-height:7.85px;color:#7F7F7F;left:-853.60px;width:1000px;text-align:right;font-family:'Liberation Sans', sans-serif;">STATUS</div><div class="t" style="top:314px;font-size:7.75px;line-height:7.75px;color:#7F7F7F;left:-853.20px;width:1000px;text-align:right;font-family:'Liberation Sans', sans-serif;">LIFESTYLE</div><div class="t" style="top:119px;font-size:8.5px;line-height:8.5px;color:#404040;font-weight:bold;left:-438.80px;width:1000px;text-align:center;font-family:'Liberation Sans', sans-serif;">DEMOGRAPHICS</div><div class="t" style="top:229px;font-size:8.5px;line-height:8.5px;color:#404040;font-weight:bold;left:-441.10px;width:1000px;text-align:center;font-family:'Liberation Sans', sans-serif;">GEOGRAPHIC</div><div class="t" style="top:295px;font-size:8.5px;line-height:8.5px;color:#404040;font-weight:bold;left:-441.10px;width:1000px;text-align:center;font-family:'Liberation Sans', sans-serif;">PSYCHOGRAPHIC</div><div class="r" style="left:19px;top:190.0px;width:132px;height:3.5px;background:#555;"></div><div class="r" style="left:19px;top:242.0px;width:132px;height:3.5px;background:#555;"></div><div class="r" style="left:19px;top:340.0px;width:132px;height:3.5px;background:#555;"></div><svg class="r" style="left:0;top:0" width="684" height="384" viewBox="0 0 684 384"><defs><linearGradient id="sh" x1="0" y1="0" x2="1" y2="1"><stop offset="0.3" stop-color="#000" stop-opacity="0.06"/><stop offset="1" stop-color="#000" stop-opacity="0"/></linearGradient><filter id="bl" x="-50%" y="-50%" width="200%" height="200%"><feGaussianBlur stdDeviation="1.2"/></filter></defs><path d="M184.60,342.40 L199.60,357.40 L176.40,380.60 L161.40,365.60 Z" fill="url(#sh)" filter="url(#bl)"/><circle cx="173" cy="354" r="16.4" fill="#fff"/><path d="M173,354 L173.00,337.60 A16.4,16.4 0 1 1 167.93,369.60 Z" fill="#EAB04A"/><path d="M303.60,342.40 L318.60,357.40 L295.40,380.60 L280.40,365.60 Z" fill="url(#sh)" filter="url(#bl)"/><circle cx="292" cy="354" r="16.4" fill="#fff"/><path d="M292,354 L286.93,369.60 A16.4,16.4 0 0 1 276.40,348.93 Z" fill="#8AB54B"/><path d="M428.60,344.90 L443.60,359.90 L420.40,383.10 L405.40,368.10 Z" fill="url(#sh)" filter="url(#bl)"/><circle cx="417" cy="356.5" r="16.4" fill="#fff"/><path d="M417,356.5 L401.40,351.43 A16.4,16.4 0 0 1 407.36,343.23 Z" fill="#2E7EAD"/><path d="M566.10,342.20 L581.10,357.20 L557.90,380.40 L542.90,365.40 Z" fill="url(#sh)" filter="url(#bl)"/><circle cx="554.5" cy="353.8" r="16.4" fill="#fff"/><path d="M554.5,353.8 L544.86,340.53 A16.4,16.4 0 0 1 554.50,337.40 Z" fill="#A5A5A5"/><g fill="#404040" transform="translate(45.5,84.5)"><ellipse cx="12.6" cy="7.3" rx="5.3" ry="7.2"/><ellipse cx="7.4" cy="7.6" rx="1" ry="1.8"/><ellipse cx="17.8" cy="7.6" rx="1" ry="1.8"/><path d="M0.3,27.3 L0.5,22.5 C0.8,19.3 2.5,18.2 6,17.2 L9.6,16.2 L12.6,17.5 L15.6,16.2 L19.2,17.2 C22.7,18.2 24.4,19.3 24.7,22.5 L24.9,27.3 Z"/><path d="M9.6,16.2 L12.6,25 L15.6,16.2 L12.6,17.5 Z" fill="#fff"/><path d="M11.9,17.8 H13.3 L13.7,23.5 L12.6,25 L11.5,23.5 Z"/></g><g transform="translate(-325,-125)"><circle cx="382.4" cy="331.6" r="9.5" fill="#404040"/><path d="M387.12,321.00 A11.6,11.6 0 0 1 378.43,342.50" fill="none" stroke="#404040" stroke-width="1.2"/><rect x="382" y="342.8" width="1.4" height="2.6" fill="#404040"/><rect x="375.5" y="345.2" width="14.5" height="1.7" fill="#404040"/></g><g transform="translate(-325,-125)"><path d="M374.5,410.3 C374.5,406.5 372.5,402.5 371.8,398.5 C370.8,394 370.8,389 372.5,386 C374.5,382.5 378,381.3 382,381.3 C387.5,381.3 391.5,385 392,390 L392.4,392.8 L395,398.2 L392.6,399.5 L392.4,401 L391.9,402 L392.1,404.5 C391.6,406.3 389.5,406.5 386.8,406.8 L385.2,410.6 Z" fill="#404040"/><circle cx="381.7" cy="389.9" r="4.3" fill="#fff"/><rect x="379.6" y="391.5" width="4.2" height="3.6" fill="#fff"/><path d="M379.6,395.9 H383.8 L381.7,398.9 Z" fill="#fff"/></g></svg><div class="t" style="top:350px;font-size:16.4px;line-height:16.4px;color:#7F7F7F;font-weight:bold;left:-279.40px;width:1000px;text-align:center;font-family:'Liberation Sans', sans-serif;">55%</div><div class="t" style="top:349px;font-size:16.4px;line-height:16.4px;color:#7F7F7F;font-weight:bold;left:-152.40px;width:1000px;text-align:center;font-family:'Liberation Sans', sans-serif;">25%</div><div class="t" style="top:350px;font-size:16.3px;line-height:16.3px;color:#7F7F7F;font-weight:bold;left:-25.70px;width:1000px;text-align:center;font-family:'Liberation Sans', sans-serif;">10%</div><div class="t" style="top:351px;font-size:16.3px;line-height:16.3px;color:#7F7F7F;font-weight:bold;left:102.70px;width:1000px;text-align:center;font-family:'Liberation Sans', sans-serif;">10%</div></div></div><div class="t" style="top:236px;font-size:8.2px;line-height:8.2px;color:#555;left:8.60px;font-family:'Liberation Sans', sans-serif;">5</div><div class="r" style="left:23.4px;top:234.5px;width:183px;height:103.7px;background:#fff;border:1px solid #D3D3D3;overflow:hidden"><div class="t" style="top:4px;font-size:10.2px;line-height:10.2px;color:#222;left:4.60px;transform:scaleX(0.52);transform-origin:0 0;font-family:'Liberation Sans', sans-serif;letter-spacing:0.3px;-webkit-text-stroke:0.35px #222">TARGET MARKET</div><div class="t" style="left:4.60px;top:14.30px;font-size:10px;line-height:10px;color:#888;transform:scale(0.26);transform-origin:0 0;font-family:Liberation Sans,sans-serif">You can edit this subtitle</div><div class="t" style="top:23px;font-size:4.75px;line-height:4.75px;color:#333;font-weight:bold;left:4.60px;font-family:'Liberation Sans', sans-serif;">Edit Title Here</div><div class="r" style="left:4.6px;top:28.1px;width:104px;height:0.5px;background:#EDEDED;"></div><div class="r" style="left:108.6px;top:28.1px;width:68px;height:69.4px;background:#EFEFEF;"></div><div class="r" style="left:108.6px;top:93.4px;width:68px;height:4.1px;background:#EAB04A;"></div><div class="t" style="left:5.60px;top:29.80px;font-size:10px;line-height:10px;color:#9a9a9a;transform:scale(0.38);transform-origin:0 0;font-family:Liberation Sans,sans-serif">&#8226;&nbsp;&nbsp;You can edit this text.</div><div class="t" style="left:5.60px;top:34.80px;font-size:10px;line-height:10px;color:#9a9a9a;transform:scale(0.38);transform-origin:0 0;font-family:Liberation Sans,sans-serif">&#8226;&nbsp;&nbsp;This text is editable. You can edit this text.</div><div class="t" style="left:5.60px;top:39.10px;font-size:10px;line-height:10px;color:#9a9a9a;transform:scale(0.38);transform-origin:0 0;font-family:Liberation Sans,sans-serif">&#8226;&nbsp;&nbsp;You can edit this text.</div><div class="t" style="left:5.60px;top:43.90px;font-size:10px;line-height:10px;color:#9a9a9a;transform:scale(0.38);transform-origin:0 0;font-family:Liberation Sans,sans-serif">&#8226;&nbsp;&nbsp;This text is editable. You can edit this text.</div><div class="t" style="top:77px;font-size:12.2px;line-height:12.2px;color:#222;left:-355.70px;width:1000px;text-align:center;transform:scaleX(0.9);transform-origin:50% 0;font-family:'Liberation Sans', sans-serif;">55%</div><svg class="r" style="left:0;top:0" width="183" height="104" viewBox="0 0 183 104"><defs><linearGradient id="tsh" x1="0" y1="0" x2="1" y2="1"><stop offset="0" stop-color="#000" stop-opacity="0.03"/><stop offset="1" stop-color="#000" stop-opacity="0"/></linearGradient></defs><path d="M157.44,37.16 L175.44,55.16 L147.16,83.44 L129.16,65.44 Z" fill="url(#tsh)"/><path d="M143.30,51.30 L143.30,31.30 A20,20 0 1 1 137.12,70.32 Z" fill="#EAB04A" stroke="#fff" stroke-width="0.6"/><path d="M143.30,51.30 L137.12,70.32 A20,20 0 0 1 124.28,45.12 Z" fill="#D9D9D9" stroke="#fff" stroke-width="0.6"/><path d="M143.30,51.30 L124.28,45.12 A20,20 0 0 1 131.54,35.12 Z" fill="#D9D9D9" stroke="#fff" stroke-width="0.6"/><path d="M143.30,51.30 L131.54,35.12 A20,20 0 0 1 143.30,31.30 Z" fill="#D9D9D9" stroke="#fff" stroke-width="0.6"/></svg></div><div class="t" style="top:354px;font-size:8.2px;line-height:8.2px;color:#555;left:8.60px;font-family:'Liberation Sans', sans-serif;">6</div><div class="r" style="left:23.4px;top:352.5px;width:183px;height:103.7px;background:#fff;border:1px solid #D3D3D3;overflow:hidden"><div class="t" style="top:4px;font-size:10.2px;line-height:10.2px;color:#222;left:4.60px;transform:scaleX(0.52);transform-origin:0 0;font-family:'Liberation Sans', sans-serif;letter-spacing:0.3px;-webkit-text-stroke:0.35px #222">TARGET MARKET</div><div class="t" style="left:4.60px;top:14.30px;font-size:10px;line-height:10px;color:#888;transform:scale(0.26);transform-origin:0 0;font-family:Liberation Sans,sans-serif">You can edit this subtitle</div><div class="t" style="top:23px;font-size:4.75px;line-height:4.75px;color:#333;font-weight:bold;left:4.60px;font-family:'Liberation Sans', sans-serif;">Edit Title Here</div><div class="r" style="left:4.6px;top:28.1px;width:104px;height:0.5px;background:#EDEDED;"></div><div class="r" style="left:108.6px;top:28.1px;width:68px;height:69.4px;background:#EFEFEF;"></div><div class="r" style="left:108.6px;top:93.4px;width:68px;height:4.1px;background:#8AB54B;"></div><div class="t" style="left:5.60px;top:29.80px;font-size:10px;line-height:10px;color:#9a9a9a;transform:scale(0.38);transform-origin:0 0;font-family:Liberation Sans,sans-serif">&#8226;&nbsp;&nbsp;You can edit this text.</div><div class="t" style="left:5.60px;top:34.80px;font-size:10px;line-height:10px;color:#9a9a9a;transform:scale(0.38);transform-origin:0 0;font-family:Liberation Sans,sans-serif">&#8226;&nbsp;&nbsp;This text is editable. You can edit this text.</div><div class="t" style="left:5.60px;top:39.10px;font-size:10px;line-height:10px;color:#9a9a9a;transform:scale(0.38);transform-origin:0 0;font-family:Liberation Sans,sans-serif">&#8226;&nbsp;&nbsp;You can edit this text.</div><div class="t" style="left:5.60px;top:43.90px;font-size:10px;line-height:10px;color:#9a9a9a;transform:scale(0.38);transform-origin:0 0;font-family:Liberation Sans,sans-serif">&#8226;&nbsp;&nbsp;This text is editable. You can edit this text.</div><div class="t" style="top:77px;font-size:12.2px;line-height:12.2px;color:#222;left:-355.70px;width:1000px;text-align:center;transform:scaleX(0.9);transform-origin:50% 0;font-family:'Liberation Sans', sans-serif;">25%</div><svg class="r" style="left:0;top:0" width="183" height="104" viewBox="0 0 183 104"><defs><linearGradient id="tsh" x1="0" y1="0" x2="1" y2="1"><stop offset="0" stop-color="#000" stop-opacity="0.03"/><stop offset="1" stop-color="#000" stop-opacity="0"/></linearGradient></defs><path d="M157.44,37.16 L175.44,55.16 L147.16,83.44 L129.16,65.44 Z" fill="url(#tsh)"/><path d="M143.30,51.30 L143.30,31.30 A20,20 0 1 1 137.12,70.32 Z" fill="#D9D9D9" stroke="#fff" stroke-width="0.6"/><path d="M143.30,51.30 L137.12,70.32 A20,20 0 0 1 124.28,45.12 Z" fill="#8AB54B" stroke="#fff" stroke-width="0.6"/><path d="M143.30,51.30 L124.28,45.12 A20,20 0 0 1 131.54,35.12 Z" fill="#D9D9D9" stroke="#fff" stroke-width="0.6"/><path d="M143.30,51.30 L131.54,35.12 A20,20 0 0 1 143.30,31.30 Z" fill="#D9D9D9" stroke="#fff" stroke-width="0.6"/></svg></div><div class="t" style="top:471px;font-size:8.2px;line-height:8.2px;color:#555;left:8.60px;font-family:'Liberation Sans', sans-serif;">7</div><div class="r" style="left:23.4px;top:470.5px;width:183px;height:103.7px;background:#fff;border:1px solid #D3D3D3;overflow:hidden"><div class="t" style="top:4px;font-size:10.2px;line-height:10.2px;color:#222;left:4.60px;transform:scaleX(0.52);transform-origin:0 0;font-family:'Liberation Sans', sans-serif;letter-spacing:0.3px;-webkit-text-stroke:0.35px #222">TARGET MARKET</div><div class="t" style="left:4.60px;top:14.30px;font-size:10px;line-height:10px;color:#888;transform:scale(0.26);transform-origin:0 0;font-family:Liberation Sans,sans-serif">You can edit this subtitle</div><div class="t" style="top:23px;font-size:4.75px;line-height:4.75px;color:#333;font-weight:bold;left:4.60px;font-family:'Liberation Sans', sans-serif;">Edit Title Here</div><div class="r" style="left:4.6px;top:28.1px;width:104px;height:0.5px;background:#EDEDED;"></div><div class="r" style="left:108.6px;top:28.1px;width:68px;height:69.4px;background:#EFEFEF;"></div><div class="r" style="left:108.6px;top:93.4px;width:68px;height:4.1px;background:#2E7EAD;"></div><div class="t" style="left:5.60px;top:29.80px;font-size:10px;line-height:10px;color:#9a9a9a;transform:scale(0.38);transform-origin:0 0;font-family:Liberation Sans,sans-serif">&#8226;&nbsp;&nbsp;You can edit this text.</div><div class="t" style="left:5.60px;top:34.80px;font-size:10px;line-height:10px;color:#9a9a9a;transform:scale(0.38);transform-origin:0 0;font-family:Liberation Sans,sans-serif">&#8226;&nbsp;&nbsp;This text is editable. You can edit this text.</div><div class="t" style="left:5.60px;top:39.10px;font-size:10px;line-height:10px;color:#9a9a9a;transform:scale(0.38);transform-origin:0 0;font-family:Liberation Sans,sans-serif">&#8226;&nbsp;&nbsp;You can edit this text.</div><div class="t" style="left:5.60px;top:43.90px;font-size:10px;line-height:10px;color:#9a9a9a;transform:scale(0.38);transform-origin:0 0;font-family:Liberation Sans,sans-serif">&#8226;&nbsp;&nbsp;This text is editable. You can edit this text.</div><div class="t" style="top:77px;font-size:12.2px;line-height:12.2px;color:#222;left:-355.70px;width:1000px;text-align:center;transform:scaleX(0.9);transform-origin:50% 0;font-family:'Liberation Sans', sans-serif;">10%</div><svg class="r" style="left:0;top:0" width="183" height="104" viewBox="0 0 183 104"><defs><linearGradient id="tsh" x1="0" y1="0" x2="1" y2="1"><stop offset="0" stop-color="#000" stop-opacity="0.03"/><stop offset="1" stop-color="#000" stop-opacity="0"/></linearGradient></defs><path d="M157.44,37.16 L175.44,55.16 L147.16,83.44 L129.16,65.44 Z" fill="url(#tsh)"/><path d="M143.30,51.30 L143.30,31.30 A20,20 0 1 1 137.12,70.32 Z" fill="#D9D9D9" stroke="#fff" stroke-width="0.6"/><path d="M143.30,51.30 L137.12,70.32 A20,20 0 0 1 124.28,45.12 Z" fill="#D9D9D9" stroke="#fff" stroke-width="0.6"/><path d="M143.30,51.30 L124.28,45.12 A20,20 0 0 1 131.54,35.12 Z" fill="#2E7EAD" stroke="#fff" stroke-width="0.6"/><path d="M143.30,51.30 L131.54,35.12 A20,20 0 0 1 143.30,31.30 Z" fill="#D9D9D9" stroke="#fff" stroke-width="0.6"/></svg></div><div class="r" style="left:0px;top:533px;width:222px;height:0.01px;background:#E6E6E6;"></div><div class="r" style="left:222.5px;top:105.5px;width:9.1px;height:426px;background:#DADADA;"></div><div class="r" style="left:222.5px;top:105.5px;width:9.1px;height:8.7px;background:#FFFFFF;"></div><svg class="r" style="left:224.5px;top:108px" width="5" height="4" viewBox="0 0 5 4"><path d="M0,3.5 H5 L2.5,0.5 Z" fill="#606060"/></svg><div class="r" style="left:222.5px;top:155.6px;width:9.1px;height:46px;background:#FFFFFF;"></div><div class="r" style="left:222.5px;top:521.7px;width:9.1px;height:9.3px;background:#FFFFFF;"></div><svg class="r" style="left:224.5px;top:524.5px" width="5" height="4" viewBox="0 0 5 4"><path d="M0,0.5 H5 L2.5,3.5 Z" fill="#606060"/></svg><div class="r" style="left:234px;top:104px;width:1px;height:429px;background:#D2D2D2;"></div><div class="r" style="left:326px;top:105.8px;width:682px;height:9.2px;background:#FFFFFF;"></div><div class="r" style="left:238.6px;top:125.8px;width:9.1px;height:383.4px;background:#FFFFFF;"></div><div class="r" style="left:327.15px;top:109.8px;width:0.8px;height:0.9px;background:#9a9a9a;"></div><div class="r" style="left:333.55px;top:107.8px;width:0.9px;height:4.6px;background:#7a7a7a;"></div><div class="r" style="left:339.95px;top:109.8px;width:0.8px;height:0.9px;background:#9a9a9a;"></div><div class="r" style="left:346.35px;top:109.8px;width:0.8px;height:0.9px;background:#9a9a9a;"></div><div class="r" style="left:352.75px;top:109.8px;width:0.8px;height:0.9px;background:#9a9a9a;"></div><div class="t" style="top:107px;font-size:8.0px;line-height:8.0px;color:#606060;left:-140.45px;width:1000px;text-align:center;font-family:'Liberation Sans', sans-serif;">6</div><div class="r" style="left:365.55px;top:109.8px;width:0.8px;height:0.9px;background:#9a9a9a;"></div><div class="r" style="left:371.95px;top:109.8px;width:0.8px;height:0.9px;background:#9a9a9a;"></div><div class="r" style="left:378.35px;top:109.8px;width:0.8px;height:0.9px;background:#9a9a9a;"></div><div class="r" style="left:384.75px;top:107.8px;width:0.9px;height:4.6px;background:#7a7a7a;"></div><div class="r" style="left:391.15px;top:109.8px;width:0.8px;height:0.9px;background:#9a9a9a;"></div><div class="r" style="left:397.55px;top:109.8px;width:0.8px;height:0.9px;background:#9a9a9a;"></div><div class="r" style="left:403.95px;top:109.8px;width:0.8px;height:0.9px;background:#9a9a9a;"></div><div class="t" style="top:107px;font-size:8.0px;line-height:8.0px;color:#606060;left:-89.25px;width:1000px;text-align:center;font-family:'Liberation Sans', sans-serif;">5</div><div class="r" style="left:416.75px;top:109.8px;width:0.8px;height:0.9px;background:#9a9a9a;"></div><div class="r" style="left:423.15px;top:109.8px;width:0.8px;height:0.9px;background:#9a9a9a;"></div><div class="r" style="left:429.55px;top:109.8px;width:0.8px;height:0.9px;background:#9a9a9a;"></div><div class="r" style="left:435.95px;top:107.8px;width:0.9px;height:4.6px;background:#7a7a7a;"></div><div class="r" style="left:442.35px;top:109.8px;width:0.8px;height:0.9px;background:#9a9a9a;"></div><div class="r" style="left:448.75px;top:109.8px;width:0.8px;height:0.9px;background:#9a9a9a;"></div><div class="r" style="left:455.15px;top:109.8px;width:0.8px;height:0.9px;background:#9a9a9a;"></div><div class="t" style="top:107px;font-size:8.0px;line-height:8.0px;color:#606060;left:-38.05px;width:1000px;text-align:center;font-family:'Liberation Sans', sans-serif;">4</div><div class="r" style="left:467.95px;top:109.8px;width:0.8px;height:0.9px;background:#9a9a9a;"></div><div class="r" style="left:474.35px;top:109.8px;width:0.8px;height:0.9px;background:#9a9a9a;"></div><div class="r" style="left:480.75px;top:109.8px;width:0.8px;height:0.9px;background:#9a9a9a;"></div><div class="r" style="left:487.15px;top:107.8px;width:0.9px;height:4.6px;background:#7a7a7a;"></div><div class="r" style="left:493.55px;top:109.8px;width:0.8px;height:0.9px;background:#9a9a9a;"></div><div class="r" style="left:499.95px;top:109.8px;width:0.8px;height:0.9px;background:#9a9a9a;"></div><div class="r" style="left:506.35px;top:109.8px;width:0.8px;height:0.9px;background:#9a9a9a;"></div><div class="t" style="top:107px;font-size:8.0px;line-height:8.0px;color:#606060;left:13.15px;width:1000px;text-align:center;font-family:'Liberation Sans', sans-serif;">3</div><div class="r" style="left:519.15px;top:109.8px;width:0.8px;height:0.9px;background:#9a9a9a;"></div><div class="r" style="left:525.55px;top:109.8px;width:0.8px;height:0.9px;background:#9a9a9a;"></div><div class="r" style="left:531.95px;top:109.8px;width:0.8px;height:0.9px;background:#9a9a9a;"></div><div class="r" style="left:538.35px;top:107.8px;width:0.9px;height:4.6px;background:#7a7a7a;"></div><div class="r" style="left:544.75px;top:109.8px;width:0.8px;height:0.9px;background:#9a9a9a;"></div><div class="r" style="left:551.15px;top:109.8px;width:0.8px;height:0.9px;background:#9a9a9a;"></div><div class="r" style="left:557.55px;top:109.8px;width:0.8px;height:0.9px;background:#9a9a9a;"></div><div class="t" style="top:107px;font-size:8.0px;line-height:8.0px;color:#606060;left:64.35px;width:1000px;text-align:center;font-family:'Liberation Sans', sans-serif;">2</div><div class="r" style="left:570.35px;top:109.8px;width:0.8px;height:0.9px;background:#9a9a9a;"></div><div class="r" style="left:576.75px;top:109.8px;width:0.8px;height:0.9px;background:#9a9a9a;"></div><div class="r" style="left:583.15px;top:109.8px;width:0.8px;height:0.9px;background:#9a9a9a;"></div><div class="r" style="left:589.55px;top:107.8px;width:0.9px;height:4.6px;background:#7a7a7a;"></div><div class="r" style="left:595.95px;top:109.8px;width:0.8px;height:0.9px;background:#9a9a9a;"></div><div class="r" style="left:602.35px;top:109.8px;width:0.8px;height:0.9px;background:#9a9a9a;"></div><div class="r" style="left:608.75px;top:109.8px;width:0.8px;height:0.9px;background:#9a9a9a;"></div><div class="t" style="top:107px;font-size:8.0px;line-height:8.0px;color:#606060;left:115.55px;width:1000px;text-align:center;font-family:'Liberation Sans', sans-serif;">1</div><div class="r" style="left:621.55px;top:109.8px;width:0.8px;height:0.9px;background:#9a9a9a;"></div><div class="r" style="left:627.95px;top:109.8px;width:0.8px;height:0.9px;background:#9a9a9a;"></div><div class="r" style="left:634.35px;top:109.8px;width:0.8px;height:0.9px;background:#9a9a9a;"></div><div class="r" style="left:640.75px;top:107.8px;width:0.9px;height:4.6px;background:#7a7a7a;"></div><div class="r" style="left:647.15px;top:109.8px;width:0.8px;height:0.9px;background:#9a9a9a;"></div><div class="r" style="left:653.55px;top:109.8px;width:0.8px;height:0.9px;background:#9a9a9a;"></div><div class="r" style="left:659.95px;top:109.8px;width:0.8px;height:0.9px;background:#9a9a9a;"></div><div class="t" style="top:107px;font-size:8.0px;line-height:8.0px;color:#606060;left:166.75px;width:1000px;text-align:center;font-family:'Liberation Sans', sans-serif;">0</div><div class="r" style="left:672.75px;top:109.8px;width:0.8px;height:0.9px;background:#9a9a9a;"></div><div class="r" style="left:679.15px;top:109.8px;width:0.8px;height:0.9px;background:#9a9a9a;"></div><div class="r" style="left:685.55px;top:109.8px;width:0.8px;height:0.9px;background:#9a9a9a;"></div><div class="r" style="left:691.95px;top:107.8px;width:0.9px;height:4.6px;background:#7a7a7a;"></div><div class="r" style="left:698.35px;top:109.8px;width:0.8px;height:0.9px;background:#9a9a9a;"></div><div class="r" style="left:704.75px;top:109.8px;width:0.8px;height:0.9px;background:#9a9a9a;"></div><div class="r" style="left:711.15px;top:109.8px;width:0.8px;height:0.9px;background:#9a9a9a;"></div><div class="t" style="top:107px;font-size:8.0px;line-height:8.0px;color:#606060;left:217.95px;width:1000px;text-align:center;font-family:'Liberation Sans', sans-serif;">1</div><div class="r" style="left:723.95px;top:109.8px;width:0.8px;height:0.9px;background:#9a9a9a;"></div><div class="r" style="left:730.35px;top:109.8px;width:0.8px;height:0.9px;background:#9a9a9a;"></div><div class="r" style="left:736.75px;top:109.8px;width:0.8px;height:0.9px;background:#9a9a9a;"></div><div class="r" style="left:743.15px;top:107.8px;width:0.9px;height:4.6px;background:#7a7a7a;"></div><div class="r" style="left:749.55px;top:109.8px;width:0.8px;height:0.9px;background:#9a9a9a;"></div><div class="r" style="left:755.95px;top:109.8px;width:0.8px;height:0.9px;background:#9a9a9a;"></div><div class="r" style="left:762.35px;top:109.8px;width:0.8px;height:0.9px;background:#9a9a9a;"></div><div class="t" style="top:107px;font-size:8.0px;line-height:8.0px;color:#606060;left:269.15px;width:1000px;text-align:center;font-family:'Liberation Sans', sans-serif;">2</div><div class="r" style="left:775.15px;top:109.8px;width:0.8px;height:0.9px;background:#9a9a9a;"></div><div class="r" style="left:781.55px;top:109.8px;width:0.8px;height:0.9px;background:#9a9a9a;"></div><div class="r" style="left:787.95px;top:109.8px;width:0.8px;height:0.9px;background:#9a9a9a;"></div><div class="r" style="left:794.35px;top:107.8px;width:0.9px;height:4.6px;background:#7a7a7a;"></div><div class="r" style="left:800.75px;top:109.8px;width:0.8px;height:0.9px;background:#9a9a9a;"></div><div class="r" style="left:807.15px;top:109.8px;width:0.8px;height:0.9px;background:#9a9a9a;"></div><div class="r" style="left:813.55px;top:109.8px;width:0.8px;height:0.9px;background:#9a9a9a;"></div><div class="t" style="top:107px;font-size:8.0px;line-height:8.0px;color:#606060;left:320.35px;width:1000px;text-align:center;font-family:'Liberation Sans', sans-serif;">3</div><div class="r" style="left:826.35px;top:109.8px;width:0.8px;height:0.9px;background:#9a9a9a;"></div><div class="r" style="left:832.75px;top:109.8px;width:0.8px;height:0.9px;background:#9a9a9a;"></div><div class="r" style="left:839.15px;top:109.8px;width:0.8px;height:0.9px;background:#9a9a9a;"></div><div class="r" style="left:845.55px;top:107.8px;width:0.9px;height:4.6px;background:#7a7a7a;"></div><div class="r" style="left:851.95px;top:109.8px;width:0.8px;height:0.9px;background:#9a9a9a;"></div><div class="r" style="left:858.35px;top:109.8px;width:0.8px;height:0.9px;background:#9a9a9a;"></div><div class="r" style="left:864.75px;top:109.8px;width:0.8px;height:0.9px;background:#9a9a9a;"></div><div class="t" style="top:107px;font-size:8.0px;line-height:8.0px;color:#606060;left:371.55px;width:1000px;text-align:center;font-family:'Liberation Sans', sans-serif;">4</div><div class="r" style="left:877.55px;top:109.8px;width:0.8px;height:0.9px;background:#9a9a9a;"></div><div class="r" style="left:883.95px;top:109.8px;width:0.8px;height:0.9px;background:#9a9a9a;"></div><div class="r" style="left:890.35px;top:109.8px;width:0.8px;height:0.9px;background:#9a9a9a;"></div><div class="r" style="left:896.75px;top:107.8px;width:0.9px;height:4.6px;background:#7a7a7a;"></div><div class="r" style="left:903.15px;top:109.8px;width:0.8px;height:0.9px;background:#9a9a9a;"></div><div class="r" style="left:909.55px;top:109.8px;width:0.8px;height:0.9px;background:#9a9a9a;"></div><div class="r" style="left:915.95px;top:109.8px;width:0.8px;height:0.9px;background:#9a9a9a;"></div><div class="t" style="top:107px;font-size:8.0px;line-height:8.0px;color:#606060;left:422.75px;width:1000px;text-align:center;font-family:'Liberation Sans', sans-serif;">5</div><div class="r" style="left:928.75px;top:109.8px;width:0.8px;height:0.9px;background:#9a9a9a;"></div><div class="r" style="left:935.15px;top:109.8px;width:0.8px;height:0.9px;background:#9a9a9a;"></div><div class="r" style="left:941.55px;top:109.8px;width:0.8px;height:0.9px;background:#9a9a9a;"></div><div class="r" style="left:947.95px;top:107.8px;width:0.9px;height:4.6px;background:#7a7a7a;"></div><div class="r" style="left:954.35px;top:109.8px;width:0.8px;height:0.9px;background:#9a9a9a;"></div><div class="r" style="left:960.75px;top:109.8px;width:0.8px;height:0.9px;background:#9a9a9a;"></div><div class="r" style="left:967.15px;top:109.8px;width:0.8px;height:0.9px;background:#9a9a9a;"></div><div class="t" style="top:107px;font-size:8.0px;line-height:8.0px;color:#606060;left:473.95px;width:1000px;text-align:center;font-family:'Liberation Sans', sans-serif;">6</div><div class="r" style="left:979.95px;top:109.8px;width:0.8px;height:0.9px;background:#9a9a9a;"></div><div class="r" style="left:986.35px;top:109.8px;width:0.8px;height:0.9px;background:#9a9a9a;"></div><div class="r" style="left:992.75px;top:109.8px;width:0.8px;height:0.9px;background:#9a9a9a;"></div><div class="r" style="left:999.15px;top:107.8px;width:0.9px;height:4.6px;background:#7a7a7a;"></div><div class="r" style="left:1005.55px;top:109.8px;width:0.8px;height:0.9px;background:#9a9a9a;"></div><div class="r" style="left:242.7px;top:131.02px;width:0.9px;height:0.8px;background:#9a9a9a;"></div><div class="r" style="left:240.8px;top:137.42px;width:4.6px;height:0.9px;background:#7a7a7a;"></div><div class="r" style="left:242.7px;top:143.83px;width:0.9px;height:0.8px;background:#9a9a9a;"></div><div class="r" style="left:242.7px;top:150.24px;width:0.9px;height:0.8px;background:#9a9a9a;"></div><div class="r" style="left:242.7px;top:156.64px;width:0.9px;height:0.8px;background:#9a9a9a;"></div><div class="t" style="left:239.1px;top:159.45px;width:8px;height:8px;line-height:8px;font-size:8px;text-align:center;color:#606060;transform:rotate(-90deg);font-family:'Liberation Sans',sans-serif">3</div><div class="r" style="left:242.7px;top:169.46px;width:0.9px;height:0.8px;background:#9a9a9a;"></div><div class="r" style="left:242.7px;top:175.86px;width:0.9px;height:0.8px;background:#9a9a9a;"></div><div class="r" style="left:242.7px;top:182.27px;width:0.9px;height:0.8px;background:#9a9a9a;"></div><div class="r" style="left:240.8px;top:188.67px;width:4.6px;height:0.9px;background:#7a7a7a;"></div><div class="r" style="left:242.7px;top:195.08px;width:0.9px;height:0.8px;background:#9a9a9a;"></div><div class="r" style="left:242.7px;top:201.49px;width:0.9px;height:0.8px;background:#9a9a9a;"></div><div class="r" style="left:242.7px;top:207.89px;width:0.9px;height:0.8px;background:#9a9a9a;"></div><div class="t" style="left:239.1px;top:210.7px;width:8px;height:8px;line-height:8px;font-size:8px;text-align:center;color:#606060;transform:rotate(-90deg);font-family:'Liberation Sans',sans-serif">2</div><div class="r" style="left:242.7px;top:220.71px;width:0.9px;height:0.8px;background:#9a9a9a;"></div><div class="r" style="left:242.7px;top:227.11px;width:0.9px;height:0.8px;background:#9a9a9a;"></div><div class="r" style="left:242.7px;top:233.52px;width:0.9px;height:0.8px;background:#9a9a9a;"></div><div class="r" style="left:240.8px;top:239.92px;width:4.6px;height:0.9px;background:#7a7a7a;"></div><div class="r" style="left:242.7px;top:246.33px;width:0.9px;height:0.8px;background:#9a9a9a;"></div><div class="r" style="left:242.7px;top:252.74px;width:0.9px;height:0.8px;background:#9a9a9a;"></div><div class="r" style="left:242.7px;top:259.14px;width:0.9px;height:0.8px;background:#9a9a9a;"></div><div class="t" style="left:239.1px;top:261.95px;width:8px;height:8px;line-height:8px;font-size:8px;text-align:center;color:#606060;transform:rotate(-90deg);font-family:'Liberation Sans',sans-serif">1</div><div class="r" style="left:242.7px;top:271.96px;width:0.9px;height:0.8px;background:#9a9a9a;"></div><div class="r" style="left:242.7px;top:278.36px;width:0.9px;height:0.8px;background:#9a9a9a;"></div><div class="r" style="left:242.7px;top:284.77px;width:0.9px;height:0.8px;background:#9a9a9a;"></div><div class="r" style="left:240.8px;top:291.18px;width:4.6px;height:0.9px;background:#7a7a7a;"></div><div class="r" style="left:242.7px;top:297.58px;width:0.9px;height:0.8px;background:#9a9a9a;"></div><div class="r" style="left:242.7px;top:303.99px;width:0.9px;height:0.8px;background:#9a9a9a;"></div><div class="r" style="left:242.7px;top:310.39px;width:0.9px;height:0.8px;background:#9a9a9a;"></div><div class="t" style="left:239.1px;top:313.2px;width:8px;height:8px;line-height:8px;font-size:8px;text-align:center;color:#606060;transform:rotate(-90deg);font-family:'Liberation Sans',sans-serif">0</div><div class="r" style="left:242.7px;top:323.21px;width:0.9px;height:0.8px;background:#9a9a9a;"></div><div class="r" style="left:242.7px;top:329.61px;width:0.9px;height:0.8px;background:#9a9a9a;"></div><div class="r" style="left:242.7px;top:336.02px;width:0.9px;height:0.8px;background:#9a9a9a;"></div><div class="r" style="left:240.8px;top:342.43px;width:4.6px;height:0.9px;background:#7a7a7a;"></div><div class="r" style="left:242.7px;top:348.83px;width:0.9px;height:0.8px;background:#9a9a9a;"></div><div class="r" style="left:242.7px;top:355.24px;width:0.9px;height:0.8px;background:#9a9a9a;"></div><div class="r" style="left:242.7px;top:361.64px;width:0.9px;height:0.8px;background:#9a9a9a;"></div><div class="t" style="left:239.1px;top:364.45px;width:8px;height:8px;line-height:8px;font-size:8px;text-align:center;color:#606060;transform:rotate(-90deg);font-family:'Liberation Sans',sans-serif">1</div><div class="r" style="left:242.7px;top:374.46px;width:0.9px;height:0.8px;background:#9a9a9a;"></div><div class="r" style="left:242.7px;top:380.86px;width:0.9px;height:0.8px;background:#9a9a9a;"></div><div class="r" style="left:242.7px;top:387.27px;width:0.9px;height:0.8px;background:#9a9a9a;"></div><div class="r" style="left:240.8px;top:393.68px;width:4.6px;height:0.9px;background:#7a7a7a;"></div><div class="r" style="left:242.7px;top:400.08px;width:0.9px;height:0.8px;background:#9a9a9a;"></div><div class="r" style="left:242.7px;top:406.49px;width:0.9px;height:0.8px;background:#9a9a9a;"></div><div class="r" style="left:242.7px;top:412.89px;width:0.9px;height:0.8px;background:#9a9a9a;"></div><div class="t" style="left:239.1px;top:415.7px;width:8px;height:8px;line-height:8px;font-size:8px;text-align:center;color:#606060;transform:rotate(-90deg);font-family:'Liberation Sans',sans-serif">2</div><div class="r" style="left:242.7px;top:425.71px;width:0.9px;height:0.8px;background:#9a9a9a;"></div><div class="r" style="left:242.7px;top:432.11px;width:0.9px;height:0.8px;background:#9a9a9a;"></div><div class="r" style="left:242.7px;top:438.52px;width:0.9px;height:0.8px;background:#9a9a9a;"></div><div class="r" style="left:240.8px;top:444.93px;width:4.6px;height:0.9px;background:#7a7a7a;"></div><div class="r" style="left:242.7px;top:451.33px;width:0.9px;height:0.8px;background:#9a9a9a;"></div><div class="r" style="left:242.7px;top:457.74px;width:0.9px;height:0.8px;background:#9a9a9a;"></div><div class="r" style="left:242.7px;top:464.14px;width:0.9px;height:0.8px;background:#9a9a9a;"></div><div class="t" style="left:239.1px;top:466.95px;width:8px;height:8px;line-height:8px;font-size:8px;text-align:center;color:#606060;transform:rotate(-90deg);font-family:'Liberation Sans',sans-serif">3</div><div class="r" style="left:242.7px;top:476.96px;width:0.9px;height:0.8px;background:#9a9a9a;"></div><div class="r" style="left:242.7px;top:483.36px;width:0.9px;height:0.8px;background:#9a9a9a;"></div><div class="r" style="left:242.7px;top:489.77px;width:0.9px;height:0.8px;background:#9a9a9a;"></div><div class="r" style="left:240.8px;top:496.18px;width:4.6px;height:0.9px;background:#7a7a7a;"></div><div class="r" style="left:242.7px;top:502.58px;width:0.9px;height:0.8px;background:#9a9a9a;"></div><div class="r" style="left:252.3px;top:152px;width:38.7px;height:32.4px;background:#EAB04A;"></div><div class="r" style="left:252.3px;top:193.8px;width:38.7px;height:32.4px;background:#8AB54B;"></div><div class="r" style="left:252.3px;top:235.2px;width:38.7px;height:32.4px;background:#2E7EAD;"></div><div class="r" style="left:252.3px;top:277px;width:38.7px;height:32.4px;background:#A5A5A5;"></div><div class="r sl" style="left:325px;top:125px;width:683px;height:384px;background:#fff;box-shadow:0 0 0 0.6px #D0D0D0;overflow:hidden"><div class="t" style="top:14px;font-size:32.5px;line-height:32.5px;color:#111;font-weight:bold;left:18.70px;transform:scaleX(0.55);transform-origin:0 0;font-family:'Liberation Sans', sans-serif;letter-spacing:2.6px;-webkit-text-stroke:0;">SEGMENTATION</div><div class="r" style="left:151px;top:56px;width:128px;height:26px;background:#D38F1A;"></div><div class="r" style="left:151px;top:82px;width:128px;height:259.3px;background:#EAB04A;"></div><div class="r" style="left:280px;top:56px;width:127px;height:26px;background:#6A8E37;"></div><div class="r" style="left:280px;top:82px;width:127px;height:259.3px;background:#8AB54B;"></div><div class="r" style="left:408px;top:56px;width:127px;height:26px;background:#236186;"></div><div class="r" style="left:408px;top:82px;width:127px;height:259.3px;background:#2E7EAD;"></div><div class="r" style="left:536px;top:56px;width:128px;height:26px;background:#7C7C7C;"></div><div class="r" style="left:536px;top:82px;width:128px;height:259.3px;background:#A5A5A5;"></div><div class="r" style="left:151px;top:82.0px;width:513px;height:1.1px;background:rgba(255,255,255,0.7);"></div><div class="r" style="left:151px;top:104.5px;width:513px;height:1.1px;background:rgba(255,255,255,0.7);"></div><div class="r" style="left:151px;top:127.0px;width:513px;height:1.1px;background:rgba(255,255,255,0.7);"></div><div class="r" style="left:151px;top:191.89999999999998px;width:513px;height:1.1px;background:rgba(255,255,255,0.7);"></div><div class="r" style="left:151px;top:244.3px;width:513px;height:1.1px;background:rgba(255,255,255,0.7);"></div><div class="r" style="left:151px;top:292.9px;width:513px;height:1.1px;background:rgba(255,255,255,0.7);"></div><div class="t" style="top:65px;font-size:11.24px;line-height:11.24px;color:#fff;font-weight:bold;left:-285.00px;width:1000px;text-align:center;font-family:'Liberation Sans', sans-serif;">Category 1</div><div class="t" style="top:90px;font-size:9.7px;line-height:9.7px;color:#fff;left:-285.00px;width:1000px;text-align:center;font-family:'Liberation Sans', sans-serif;">35-70</div><div class="t" style="top:112px;font-size:9.7px;line-height:9.7px;color:#fff;left:-285.00px;width:1000px;text-align:center;font-family:'Liberation Sans', sans-serif;">Both</div><div class="t" style="top:156px;font-size:9.9px;line-height:9.9px;color:#fff;left:-285.00px;width:1000px;text-align:center;font-family:'Liberation Sans', sans-serif;">You can edit this text</div><div class="t" style="top:214px;font-size:9.9px;line-height:9.9px;color:#fff;left:-285.00px;width:1000px;text-align:center;font-family:'Liberation Sans', sans-serif;">You can edit this text</div><div class="t" style="top:264px;font-size:9.9px;line-height:9.9px;color:#fff;left:-285.00px;width:1000px;text-align:center;font-family:'Liberation Sans', sans-serif;">You can edit this text</div><div class="t" style="top:312px;font-size:9.9px;line-height:9.9px;color:#fff;left:-285.00px;width:1000px;text-align:center;font-family:'Liberation Sans', sans-serif;">You can edit this text</div><div class="t" style="top:65px;font-size:11.24px;line-height:11.24px;color:#fff;font-weight:bold;left:-156.50px;width:1000px;text-align:center;font-family:'Liberation Sans', sans-serif;">Category 2</div><div class="t" style="top:90px;font-size:9.7px;line-height:9.7px;color:#fff;left:-156.50px;width:1000px;text-align:center;font-family:'Liberation Sans', sans-serif;">35-65</div><div class="t" style="top:112px;font-size:9.7px;line-height:9.7px;color:#fff;left:-156.50px;width:1000px;text-align:center;font-family:'Liberation Sans', sans-serif;">Both</div><div class="t" style="top:156px;font-size:9.9px;line-height:9.9px;color:#fff;left:-156.50px;width:1000px;text-align:center;font-family:'Liberation Sans', sans-serif;">You can edit this text</div><div class="t" style="top:209px;font-size:9.9px;line-height:9.9px;color:#fff;left:-156.50px;width:1000px;text-align:center;font-family:'Liberation Sans', sans-serif;">UK, Canada, Australia,</div><div class="t" style="top:221px;font-size:9.9px;line-height:9.9px;color:#fff;left:-156.50px;width:1000px;text-align:center;font-family:'Liberation Sans', sans-serif;">USA - West Coast.</div><div class="t" style="top:264px;font-size:9.9px;line-height:9.9px;color:#fff;left:-156.50px;width:1000px;text-align:center;font-family:'Liberation Sans', sans-serif;">You can edit this text</div><div class="t" style="top:312px;font-size:9.9px;line-height:9.9px;color:#fff;left:-156.50px;width:1000px;text-align:center;font-family:'Liberation Sans', sans-serif;">You can edit this text</div><div class="t" style="top:65px;font-size:11.24px;line-height:11.24px;color:#fff;font-weight:bold;left:-28.50px;width:1000px;text-align:center;font-family:'Liberation Sans', sans-serif;">Category 3</div><div class="t" style="top:90px;font-size:9.7px;line-height:9.7px;color:#fff;left:-28.50px;width:1000px;text-align:center;font-family:'Liberation Sans', sans-serif;">35-60</div><div class="t" style="top:112px;font-size:9.7px;line-height:9.7px;color:#fff;left:-28.50px;width:1000px;text-align:center;font-family:'Liberation Sans', sans-serif;">Both</div><div class="t" style="top:156px;font-size:9.9px;line-height:9.9px;color:#fff;left:-28.50px;width:1000px;text-align:center;font-family:'Liberation Sans', sans-serif;">You can edit this text</div><div class="t" style="top:214px;font-size:9.9px;line-height:9.9px;color:#fff;left:-28.50px;width:1000px;text-align:center;font-family:'Liberation Sans', sans-serif;">You can edit this text</div><div class="t" style="top:264px;font-size:9.9px;line-height:9.9px;color:#fff;left:-28.50px;width:1000px;text-align:center;font-family:'Liberation Sans', sans-serif;">You can edit this text</div><div class="t" style="top:312px;font-size:9.9px;line-height:9.9px;color:#fff;left:-28.50px;width:1000px;text-align:center;font-family:'Liberation Sans', sans-serif;">You can edit this text</div><div class="t" style="top:65px;font-size:11.24px;line-height:11.24px;color:#fff;font-weight:bold;left:100.00px;width:1000px;text-align:center;font-family:'Liberation Sans', sans-serif;">Category 4</div><div class="t" style="top:112px;font-size:9.7px;line-height:9.7px;color:#fff;left:100.00px;width:1000px;text-align:center;font-family:'Liberation Sans', sans-serif;">Both</div><div class="t" style="top:156px;font-size:9.9px;line-height:9.9px;color:#fff;left:100.00px;width:1000px;text-align:center;font-family:'Liberation Sans', sans-serif;">You can edit this text</div><div class="t" style="top:214px;font-size:9.9px;line-height:9.9px;color:#fff;left:100.00px;width:1000px;text-align:center;font-family:'Liberation Sans', sans-serif;">You can edit this text</div><div class="t" style="top:258px;font-size:9.9px;line-height:9.9px;color:#fff;left:100.00px;width:1000px;text-align:center;font-family:'Liberation Sans', sans-serif;">You can edit this text</div><div class="t" style="top:306px;font-size:9.9px;line-height:9.9px;color:#fff;left:100.00px;width:1000px;text-align:center;font-family:'Liberation Sans', sans-serif;">You can edit this text</div><div class="t" style="top:96px;font-size:8.0px;line-height:8.0px;color:#7F7F7F;left:-853.60px;width:1000px;text-align:right;font-family:'Liberation Sans', sans-serif;">AGE</div><div class="t" style="top:120px;font-size:7.85px;line-height:7.85px;color:#7F7F7F;left:-853.60px;width:1000px;text-align:right;font-family:'Liberation Sans', sans-serif;">GENDER</div><div class="t" style="top:159px;font-size:7.85px;line-height:7.85px;color:#7F7F7F;left:-853.60px;width:1000px;text-align:right;font-family:'Liberation Sans', sans-serif;">OCCUPATION</div><div class="t" style="top:265px;font-size:7.85px;line-height:7.85px;color:#7F7F7F;left:-853.60px;width:1000px;text-align:right;font-family:'Liberation Sans', sans-serif;">SOCIAL</div><div class="t" style="top:274px;font-size:7.85px;line-height:7.85px;color:#7F7F7F;left:-853.60px;width:1000px;text-align:right;font-family:'Liberation Sans', sans-serif;">STATUS</div><div class="t" style="top:314px;font-size:7.75px;line-height:7.75px;color:#7F7F7F;left:-853.20px;width:1000px;text-align:right;font-family:'Liberation Sans', sans-serif;">LIFESTYLE</div><div class="t" style="top:119px;font-size:8.5px;line-height:8.5px;color:#404040;font-weight:bold;left:-438.80px;width:1000px;text-align:center;font-family:'Liberation Sans', sans-serif;">DEMOGRAPHICS</div><div class="t" style="top:229px;font-size:8.5px;line-height:8.5px;color:#404040;font-weight:bold;left:-441.10px;width:1000px;text-align:center;font-family:'Liberation Sans', sans-serif;">GEOGRAPHIC</div><div class="t" style="top:295px;font-size:8.5px;line-height:8.5px;color:#404040;font-weight:bold;left:-441.10px;width:1000px;text-align:center;font-family:'Liberation Sans', sans-serif;">PSYCHOGRAPHIC</div><div class="r" style="left:19px;top:191.0px;width:132px;height:1.2px;background:#6b6b6b;"></div><div class="r" style="left:19px;top:243.0px;width:132px;height:1.2px;background:#6b6b6b;"></div><div class="r" style="left:19px;top:341.0px;width:132px;height:1.2px;background:#6b6b6b;"></div><svg class="r" style="left:0;top:0" width="684" height="384" viewBox="0 0 684 384"><defs><linearGradient id="sh" x1="0" y1="0" x2="1" y2="1"><stop offset="0.3" stop-color="#000" stop-opacity="0.06"/><stop offset="1" stop-color="#000" stop-opacity="0"/></linearGradient><filter id="bl" x="-50%" y="-50%" width="200%" height="200%"><feGaussianBlur stdDeviation="1.2"/></filter></defs><path d="M184.60,342.40 L199.60,357.40 L176.40,380.60 L161.40,365.60 Z" fill="url(#sh)" filter="url(#bl)"/><circle cx="173" cy="354" r="16.4" fill="#fff"/><path d="M173,354 L173.00,337.60 A16.4,16.4 0 1 1 167.93,369.60 Z" fill="#EAB04A"/><path d="M303.60,342.40 L318.60,357.40 L295.40,380.60 L280.40,365.60 Z" fill="url(#sh)" filter="url(#bl)"/><circle cx="292" cy="354" r="16.4" fill="#fff"/><path d="M292,354 L286.93,369.60 A16.4,16.4 0 0 1 276.40,348.93 Z" fill="#8AB54B"/><path d="M428.60,344.90 L443.60,359.90 L420.40,383.10 L405.40,368.10 Z" fill="url(#sh)" filter="url(#bl)"/><circle cx="417" cy="356.5" r="16.4" fill="#fff"/><path d="M417,356.5 L401.40,351.43 A16.4,16.4 0 0 1 407.36,343.23 Z" fill="#2E7EAD"/><path d="M566.10,342.20 L581.10,357.20 L557.90,380.40 L542.90,365.40 Z" fill="url(#sh)" filter="url(#bl)"/><circle cx="554.5" cy="353.8" r="16.4" fill="#fff"/><path d="M554.5,353.8 L544.86,340.53 A16.4,16.4 0 0 1 554.50,337.40 Z" fill="#A5A5A5"/><g fill="#404040" transform="translate(45.5,84.5)"><ellipse cx="12.6" cy="7.3" rx="5.3" ry="7.2"/><ellipse cx="7.4" cy="7.6" rx="1" ry="1.8"/><ellipse cx="17.8" cy="7.6" rx="1" ry="1.8"/><path d="M0.3,27.3 L0.5,22.5 C0.8,19.3 2.5,18.2 6,17.2 L9.6,16.2 L12.6,17.5 L15.6,16.2 L19.2,17.2 C22.7,18.2 24.4,19.3 24.7,22.5 L24.9,27.3 Z"/><path d="M9.6,16.2 L12.6,25 L15.6,16.2 L12.6,17.5 Z" fill="#fff"/><path d="M11.9,17.8 H13.3 L13.7,23.5 L12.6,25 L11.5,23.5 Z"/></g><g transform="translate(-325,-125)"><circle cx="382.4" cy="331.6" r="9.5" fill="#404040"/><path d="M387.12,321.00 A11.6,11.6 0 0 1 378.43,342.50" fill="none" stroke="#404040" stroke-width="1.2"/><rect x="382" y="342.8" width="1.4" height="2.6" fill="#404040"/><rect x="375.5" y="345.2" width="14.5" height="1.7" fill="#404040"/></g><g transform="translate(-325,-125)"><path d="M374.5,410.3 C374.5,406.5 372.5,402.5 371.8,398.5 C370.8,394 370.8,389 372.5,386 C374.5,382.5 378,381.3 382,381.3 C387.5,381.3 391.5,385 392,390 L392.4,392.8 L395,398.2 L392.6,399.5 L392.4,401 L391.9,402 L392.1,404.5 C391.6,406.3 389.5,406.5 386.8,406.8 L385.2,410.6 Z" fill="#404040"/><circle cx="381.7" cy="389.9" r="4.3" fill="#fff"/><rect x="379.6" y="391.5" width="4.2" height="3.6" fill="#fff"/><path d="M379.6,395.9 H383.8 L381.7,398.9 Z" fill="#fff"/></g></svg><div class="t" style="top:350px;font-size:16.4px;line-height:16.4px;color:#7F7F7F;font-weight:bold;left:-279.40px;width:1000px;text-align:center;font-family:'Liberation Sans', sans-serif;">55%</div><div class="t" style="top:349px;font-size:16.4px;line-height:16.4px;color:#7F7F7F;font-weight:bold;left:-152.40px;width:1000px;text-align:center;font-family:'Liberation Sans', sans-serif;">25%</div><div class="t" style="top:350px;font-size:16.3px;line-height:16.3px;color:#7F7F7F;font-weight:bold;left:-25.70px;width:1000px;text-align:center;font-family:'Liberation Sans', sans-serif;">10%</div><div class="t" style="top:351px;font-size:16.3px;line-height:16.3px;color:#7F7F7F;font-weight:bold;left:102.70px;width:1000px;text-align:center;font-family:'Liberation Sans', sans-serif;">10%</div></div><div class="r" style="left:1014.4px;top:105.5px;width:9.6px;height:389px;background:#DADADA;"></div><div class="r" style="left:1014.4px;top:105.5px;width:9.6px;height:8.7px;background:#FFFFFF;"></div><svg class="r" style="left:1016.8px;top:108px" width="5" height="4" viewBox="0 0 5 4"><path d="M0,3.5 H5 L2.5,0.5 Z" fill="#606060"/></svg><div class="r" style="left:1014.4px;top:149.5px;width:9.6px;height:10.5px;background:#FFFFFF;"></div><div class="r" style="left:1014.4px;top:485.7px;width:9.6px;height:8.6px;background:#FFFFFF;"></div><svg class="r" style="left:1016.8px;top:488.5px" width="5" height="4" viewBox="0 0 5 4"><path d="M0,0.5 H5 L2.5,3.5 Z" fill="#606060"/></svg><div class="r" style="left:237.5px;top:519.5px;width:774px;height:9.3px;background:#DADADA;"></div><div class="r" style="left:237.5px;top:519.5px;width:8.8px;height:9.3px;background:#FFFFFF;"></div><svg class="r" style="left:240px;top:521.7px" width="4" height="5" viewBox="0 0 4 5"><path d="M3.5,0 V5 L0.5,2.5 Z" fill="#606060"/></svg><div class="r" style="left:294.3px;top:519.5px;width:708px;height:9.3px;background:#FFFFFF;"></div><div class="r" style="left:1002.6px;top:519.5px;width:8.9px;height:9.3px;background:#FFFFFF;"></div><svg class="r" style="left:1005.5px;top:521.7px" width="4" height="5" viewBox="0 0 4 5"><path d="M0.5,0 V5 L3.5,2.5 Z" fill="#606060"/></svg><div class="r" style="left:235px;top:531px;width:789px;height:1px;background:#D8D8D8;"></div><div class="r" style="left:0px;top:533px;width:1024px;height:16px;background:#F1F1F1;"></div><div class="r" style="left:0px;top:533px;width:1024px;height:1px;background:#D6D6D6;"></div><div class="r" style="left:0px;top:549px;width:1024px;height:1px;background:#5A5A5A;"></div><div class="t" style="top:539px;font-size:6.85px;line-height:6.85px;color:#606060;left:4.40px;font-family:'Liberation Sans', sans-serif;">Slide 4 of 31</div><svg class="r" style="left:54px;top:536px" width="12" height="10" viewBox="0 0 12 10"><path d="M0.5,0.5 H5.5 V9.5 H0.5 Z M5.5,0.5 H10.5" fill="none" stroke="#777" stroke-width="0.8"/><path d="M5.5,5 L7,6.5 L10.5,2.5" fill="none" stroke="#777" stroke-width="0.9"/><path d="M5.5,9.5 V8" stroke="#777" stroke-width="0.8"/></svg><div class="t" style="top:539px;font-size:6.75px;line-height:6.75px;color:#606060;left:73.00px;font-family:'Liberation Sans', sans-serif;">English (United States)</div><svg class="r" style="left:766.5px;top:536.5px" width="8" height="9" viewBox="0 0 8 9"><path d="M1.5,3 L4,0.8 L6.5,3 Z" fill="#666"/><path d="M0,4.5 H8 M0,6.3 H8 M0,8.1 H8" stroke="#777" stroke-width="0.7"/></svg><div class="t" style="top:538px;font-size:7.0px;line-height:7.0px;color:#606060;left:777.00px;font-family:'Liberation Sans', sans-serif;">Notes</div><div class="r" style="left:807.2px;top:533.7px;width:21.8px;height:14.3px;background:#D2D2D2;"></div><svg class="r" style="left:812.5px;top:536.3px" width="11" height="10" viewBox="0 0 11 10"><rect x="0.5" y="0.5" width="9.5" height="8.5" fill="none" stroke="#666" stroke-width="0.8"/><path d="M2.5,0.5 V9 M2.5,6.5 H10" stroke="#666" stroke-width="0.8"/><rect x="4" y="2" width="4.5" height="3" fill="none" stroke="#666" stroke-width="0.7"/></svg><svg class="r" style="left:834.5px;top:536.5px" width="10" height="10" viewBox="0 0 10 10"><rect x="0.5" y="0.5" width="3.8" height="3.5" fill="none" stroke="#777" stroke-width="0.7"/><rect x="5.5" y="0.5" width="3.8" height="3.5" fill="none" stroke="#777" stroke-width="0.7"/><rect x="0.5" y="5.5" width="3.8" height="3.5" fill="none" stroke="#777" stroke-width="0.7"/><rect x="5.5" y="5.5" width="3.8" height="3.5" fill="none" stroke="#777" stroke-width="0.7"/></svg><svg class="r" style="left:857.5px;top:536.3px" width="10" height="10" viewBox="0 0 10 10"><path d="M0.5,0.8 H4.5 L5,1.3 L5.5,0.8 H9.5 V8.8 H5.5 L5,9.3 L4.5,8.8 H0.5 Z M5,1.3 V9" fill="none" stroke="#777" stroke-width="0.8"/><path d="M1.8,3 V7 M3.3,3 V7 M6.7,3 V7 M8.2,3 V7" stroke="#999" stroke-width="0.6"/></svg><svg class="r" style="left:880.5px;top:536.3px" width="10" height="10" viewBox="0 0 10 10"><rect x="0" y="0.5" width="9.5" height="0.9" fill="#777"/><rect x="0.8" y="1.4" width="8" height="4.6" fill="none" stroke="#777" stroke-width="0.8"/><path d="M4.8,6 V8.5 M3,9 H6.6" stroke="#777" stroke-width="0.8"/></svg><div class="r" style="left:899px;top:540.3px;width:5px;height:1.1px;background:#666;"></div><div class="r" style="left:906.7px;top:540.6px;width:66.3px;height:0.6px;background:#BDBDBD;"></div><div class="r" style="left:939.6px;top:538.5px;width:0.7px;height:4.5px;background:#C8C8C8;"></div><div class="r" style="left:931.8px;top:537px;width:2.4px;height:7.2px;background:#555;"></div><div class="r" style="left:975.6px;top:540.3px;width:5.4px;height:1.1px;background:#666;"></div><div class="r" style="left:977.75px;top:538px;width:1.1px;height:5.6px;background:#666;"></div><div class="t" style="top:539px;font-size:6.5px;line-height:6.5px;color:#606060;left:987.00px;font-family:'Liberation Sans', sans-serif;">80%</div><svg class="r" style="left:1012.5px;top:536.5px" width="9" height="9" viewBox="0 0 9 9"><rect x="0.4" y="0.4" width="8.2" height="8.2" fill="none" stroke="#777" stroke-width="0.8"/><path d="M1.5,1.5 L3.5,3.5 M7.5,1.5 L5.5,3.5 M1.5,7.5 L3.5,5.5 M7.5,7.5 L5.5,5.5" stroke="#777" stroke-width="0.8"/></svg>
</body></html>
